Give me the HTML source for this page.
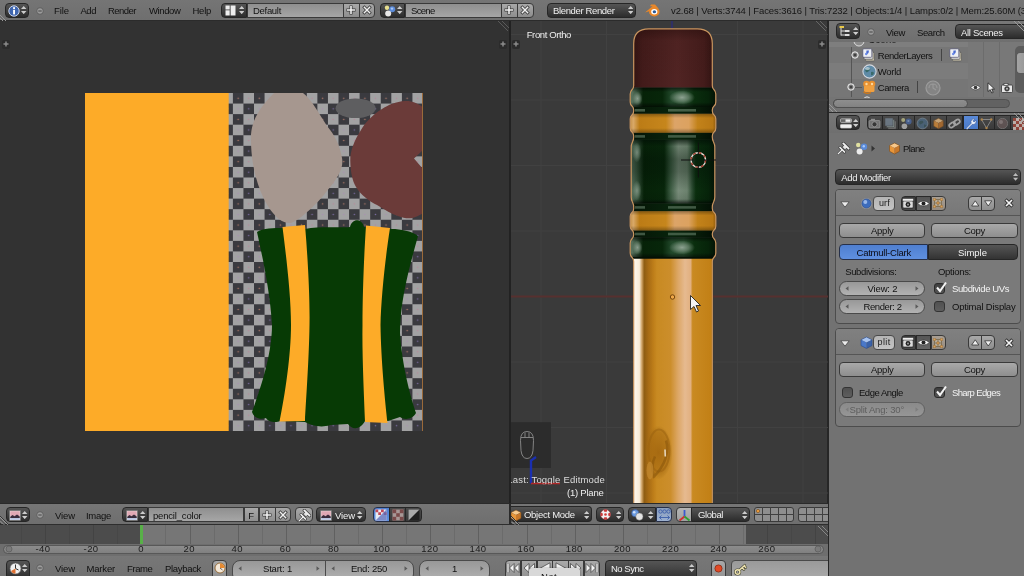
<!DOCTYPE html>
<html><head><meta charset="utf-8"><title>Blender</title>
<style>
*{box-sizing:border-box;margin:0;padding:0}
html,body{width:1024px;height:576px;overflow:hidden;background:#727272;font-family:"Liberation Sans",sans-serif;font-size:10px;color:#111}
.a{position:absolute;display:block}
.t{position:absolute;white-space:nowrap}
.btn{border:1px solid #3a3a3a;border-radius:4px;background:linear-gradient(#a9a9a9,#8e8e8e)}
.dd{border:1px solid #262626;border-radius:4px;background:linear-gradient(#555,#2c2c2c)}
.fld{border:1px solid #3a3a3a;background:linear-gradient(#8f8f8f,#a6a6a6)}
.num{border:1px solid #4a4a4a;border-radius:8px;background:linear-gradient(#989898,#b2b2b2)}
#wrap{position:absolute;left:-8px;top:-8px;width:1040px;height:592px;filter:blur(0.5px);overflow:hidden}
#in{position:absolute;left:8px;top:8px;width:1024px;height:576px}
</style></head><body><div id="wrap"><div id="in">
<div class="a " style="left:-8.00px;top:-8.00px;width:1040.00px;height:28.00px;background:linear-gradient(#777,#6f6f6f)"></div>
<div class="a " style="left:-8.00px;top:19.50px;width:1040.00px;height:1.50px;background:#2b2b2b"></div>
<div class="a " style="left:-8.00px;top:20.50px;width:518.00px;height:482.50px;background:#323232"></div>
<div class="a " style="left:509.30px;top:20.50px;width:1.70px;height:482.50px;background:#222"></div>
<div class="a v3d" style="left:511.00px;top:20.50px;width:316.50px;height:483.00px;background:#3a3a3a;overflow:hidden"></div>
<div class="a " style="left:827.00px;top:20.00px;width:2.00px;height:564.00px;background:#262626"></div>
<div class="a " style="left:829.00px;top:21.00px;width:203.00px;height:91.00px;background:#757575"></div>
<div class="a " style="left:829.00px;top:111.50px;width:203.00px;height:1.40px;background:#2a2a2a"></div>
<div class="a " style="left:829.00px;top:112.90px;width:203.00px;height:471.10px;background:#727272"></div>
<div class="a " style="left:-8.00px;top:503.00px;width:836.00px;height:22.00px;background:linear-gradient(#767676,#6e6e6e)"></div>
<div class="a " style="left:-8.00px;top:502.50px;width:836.00px;height:1.00px;background:#2a2a2a"></div>
<div class="a " style="left:509.30px;top:503.00px;width:1.70px;height:22.00px;background:#2a2a2a"></div>
<div class="a " style="left:-8.00px;top:524.40px;width:836.00px;height:59.60px;background:#2e2e2e"></div>
<svg class="a" style="left:85.00px;top:93.00px;" width="338" height="338" viewBox="0 0 338 338"><defs><pattern id="ck" x="0" y="0" width="21.125" height="21.125" patternUnits="userSpaceOnUse"><rect width="21.125" height="21.125" fill="#a2a2a3"/><rect width="10.5625" height="10.5625" fill="#3a3a3f"/><rect x="10.5625" y="10.5625" width="10.5625" height="10.5625" fill="#3a3a3f"/><circle cx="5.28125" cy="5.28125" r="0.8" fill="#b07a6a"/><circle cx="15.84375" cy="5.28125" r="0.8" fill="#b58a9a"/><circle cx="15.84375" cy="15.84375" r="0.8" fill="#7a6aa0"/><circle cx="5.28125" cy="15.84375" r="0.8" fill="#a890b0"/></pattern></defs><rect x="0" y="0" width="338" height="338" fill="url(#ck)"/><rect x="0" y="0" width="143.7" height="338" fill="#fdab28"/><path fill="#a6978f" d="M189,0 C177,12 165,27 166,47 C166,72 173,97 183,113 C190,125 199,131 206,130 C215,127 233,110 242,98 C253,85 259,75 257,65 C255,52 249,41 242,33 C233,19 227,7 218,0 Z"/><ellipse cx="270.6" cy="15.200000000000003" rx="20" ry="9.8" fill="#5e5e60"/><path fill="#6b3b39" d="M338,14.5 C333,10 326,7.5 320,8 C311,8.5 303,12 297,16 C287,22 280,30 276,37 C269,48 265,58 265.3,68 C265.5,78 267,87 271,94 C276,102 284,108 292,112 C300,117 307,121 313,123 C319,125.5 325,126 329,124.5 C333,123 336,121.5 338,120 L338,76 L329,65.5 L338,57 Z"/><path fill="#073a05" d="M172,139 C177,135 190,135 198,135 L220,136 C235,133 255,135 265,134 C267,125 277,125 279,134 L307,136 C315,136 327,138 333,143 C325,172 315,207 315,240 C317,272 325,302 331,320 C327,327 319,327 315,324 L303,328 L280,328 C275,337 267,337 263,331 L245,332 C237,335 227,333 220,329 L195,328 C191,330 183,329 181,325 C175,327 169,325 167,319 C175,297 187,262 187,232 C185,197 177,162 172,139 Z"/><path fill="#fdab28" d="M197.5,134 L220,132 C223,167 225,207 224.5,232 C224,267 221,307 220,328 L194.5,328.5 C200,302 206,262 206,232 C206,202 201,162 197.5,134 Z"/><path fill="#fdab28" d="M281,132.5 L305,135 C300,167 296,207 295.5,232 C296,267 300,307 302.5,330 L280,329 C279,302 277,262 277.5,232 C277.5,202 279,162 281,132.5 Z"/><rect x="337" y="0" width="1" height="338" fill="#9a6a3a"/></svg>
<div class="a " style="left:2.00px;top:40.10px;width:8.00px;height:8.60px;background:#2b2b2b;border-radius:2px"></div>
<svg class="a" style="left:3.00px;top:41.40px;" width="6" height="6" viewBox="0 0 6 6"><path d="M3 0.3 L3.7 2.3 L5.7 3 L3.7 3.7 L3 5.7 L2.3 3.7 L0.3 3 L2.3 2.3Z" fill="#8e8e8e" stroke="#8e8e8e" stroke-width="0.5"/></svg>
<div class="a " style="left:499.30px;top:40.10px;width:8.00px;height:8.60px;background:#2b2b2b;border-radius:2px"></div>
<svg class="a" style="left:500.30px;top:41.40px;" width="6" height="6" viewBox="0 0 6 6"><path d="M3 0.3 L3.7 2.3 L5.7 3 L3.7 3.7 L3 5.7 L2.3 3.7 L0.3 3 L2.3 2.3Z" fill="#8e8e8e" stroke="#8e8e8e" stroke-width="0.5"/></svg>
<svg class="a" style="left:496.00px;top:21.00px;" width="14" height="12" viewBox="0 0 14 12"><path d="M2 0L12 10M6 0L13 7" stroke="#5a5a5a" stroke-width="1"/></svg>
<div class="a" style="left:511px;top:20.5px;width:317px;height:482.5px;overflow:hidden">
<svg class="a" style="left:0;top:0" width="318" height="483" viewBox="0 0 318 483"><line x1="30" y1="0" x2="30" y2="483" stroke="#414141" stroke-width="1"/><line x1="95.5" y1="0" x2="95.5" y2="483" stroke="#414141" stroke-width="1"/><line x1="226.5" y1="0" x2="226.5" y2="483" stroke="#414141" stroke-width="1"/><line x1="292" y1="0" x2="292" y2="483" stroke="#414141" stroke-width="1"/><line x1="0" y1="13.5" x2="318" y2="13.5" stroke="#414141" stroke-width="1"/><line x1="0" y1="79.0" x2="318" y2="79.0" stroke="#414141" stroke-width="1"/><line x1="0" y1="144.5" x2="318" y2="144.5" stroke="#414141" stroke-width="1"/><line x1="0" y1="210.0" x2="318" y2="210.0" stroke="#414141" stroke-width="1"/><line x1="0" y1="341.0" x2="318" y2="341.0" stroke="#414141" stroke-width="1"/><line x1="0" y1="406.5" x2="318" y2="406.5" stroke="#414141" stroke-width="1"/><line x1="0" y1="472.0" x2="318" y2="472.0" stroke="#414141" stroke-width="1"/><line x1="0" y1="275.5" x2="318" y2="275.5" stroke="#57302f" stroke-width="2.2"/><line x1="161" y1="0" x2="161" y2="483" stroke="#303064" stroke-width="2.2"/><defs>
<linearGradient id="er" x1="0" x2="1" y1="0" y2="0"><stop offset="0" stop-color="#2a100e"/><stop offset="0.15" stop-color="#421b1a"/><stop offset="0.55" stop-color="#512423"/><stop offset="0.85" stop-color="#441c1b"/><stop offset="1" stop-color="#2a100e"/></linearGradient>
<linearGradient id="erv" x1="0" x2="0" y1="0" y2="1"><stop offset="0" stop-color="#1e0a08" stop-opacity="0.7"/><stop offset="0.3" stop-color="#1e0a08" stop-opacity="0.05"/><stop offset="1" stop-color="#1e0a08" stop-opacity="0"/></linearGradient>
<linearGradient id="gr" x1="0" x2="1" y1="0" y2="0"><stop offset="0" stop-color="#0c2412"/><stop offset="0.03" stop-color="#5a7460"/><stop offset="0.08" stop-color="#3c5842"/><stop offset="0.16" stop-color="#062208"/><stop offset="0.38" stop-color="#07260a"/><stop offset="0.48" stop-color="#21482a"/><stop offset="0.62" stop-color="#274e2f"/><stop offset="0.74" stop-color="#0a2e0e"/><stop offset="0.9" stop-color="#06240a"/><stop offset="1" stop-color="#031005"/></linearGradient>
<linearGradient id="grm" x1="0" x2="1" y1="0" y2="0"><stop offset="0" stop-color="#0c2412"/><stop offset="0.03" stop-color="#5a7460"/><stop offset="0.09" stop-color="#3c5842"/><stop offset="0.17" stop-color="#062208"/><stop offset="0.40" stop-color="#07260a"/><stop offset="0.47" stop-color="#3a5a40"/><stop offset="0.56" stop-color="#788c7a"/><stop offset="0.66" stop-color="#6c826e"/><stop offset="0.72" stop-color="#2a4a30"/><stop offset="0.76" stop-color="#0a2e0e"/><stop offset="0.9" stop-color="#06240a"/><stop offset="1" stop-color="#031005"/></linearGradient><linearGradient id="grd" x1="0" x2="1" y1="0" y2="0"><stop offset="0" stop-color="#041206"/><stop offset="0.2" stop-color="#061a08"/><stop offset="0.5" stop-color="#08240c"/><stop offset="0.8" stop-color="#061a08"/><stop offset="1" stop-color="#020c04"/></linearGradient>
<linearGradient id="og" x1="0" x2="1" y1="0" y2="0"><stop offset="0" stop-color="#c08a40"/><stop offset="0.05" stop-color="#d8a868"/><stop offset="0.12" stop-color="#bc7c16"/><stop offset="0.42" stop-color="#c6861c"/><stop offset="0.52" stop-color="#dca468"/><stop offset="0.68" stop-color="#dca260"/><stop offset="0.78" stop-color="#c2821a"/><stop offset="0.95" stop-color="#b87814"/><stop offset="1" stop-color="#86540c"/></linearGradient>
<linearGradient id="bd" x1="0" x2="1" y1="0" y2="0"><stop offset="0" stop-color="#c8a060"/><stop offset="0.012" stop-color="#fff8ee"/><stop offset="0.08" stop-color="#f8ecd8"/><stop offset="0.11" stop-color="#d0a468"/><stop offset="0.14" stop-color="#8e5c12"/><stop offset="0.19" stop-color="#a66a14"/><stop offset="0.26" stop-color="#bf7f1a"/><stop offset="0.30" stop-color="#c88a22"/><stop offset="0.47" stop-color="#cc8e2c"/><stop offset="0.56" stop-color="#dca664"/><stop offset="0.65" stop-color="#e6ba90"/><stop offset="0.72" stop-color="#e2b080"/><stop offset="0.745" stop-color="#c98a22"/><stop offset="0.97" stop-color="#c28016"/><stop offset="1" stop-color="#a06a10"/></linearGradient>
<linearGradient id="bandv" x1="0" x2="0" y1="0" y2="1"><stop offset="0" stop-color="#000" stop-opacity="0.55"/><stop offset="0.22" stop-color="#000" stop-opacity="0"/><stop offset="0.75" stop-color="#000" stop-opacity="0"/><stop offset="1" stop-color="#000" stop-opacity="0.6"/></linearGradient>
<linearGradient id="mainv" x1="0" x2="0" y1="0" y2="1"><stop offset="0" stop-color="#021006" stop-opacity="0.7"/><stop offset="0.1" stop-color="#021006" stop-opacity="0.1"/><stop offset="0.3" stop-color="#021006" stop-opacity="0.35"/><stop offset="0.5" stop-color="#021006" stop-opacity="0.3"/><stop offset="0.8" stop-color="#021006" stop-opacity="0"/><stop offset="0.93" stop-color="#021006" stop-opacity="0.1"/><stop offset="1" stop-color="#000" stop-opacity="0.7"/></linearGradient>
<radialGradient id="hl"><stop offset="0" stop-color="#9fb0a2" stop-opacity="0.9"/><stop offset="0.5" stop-color="#8aa08e" stop-opacity="0.6"/><stop offset="1" stop-color="#8aa08e" stop-opacity="0"/></radialGradient>
<radialGradient id="kn"><stop offset="0" stop-color="#a0640e" stop-opacity="0.85"/><stop offset="0.75" stop-color="#a86c12" stop-opacity="0.6"/><stop offset="1" stop-color="#a06a14" stop-opacity="0"/></radialGradient>
<clipPath id="sc"><path d="M122.70,489.50 L122.70,240.60 Q122.70,238.00 120.95,236.25 L120.95,236.25 Q119.20,234.50 119.20,231.90 L119.20,222.10 Q119.20,219.50 120.95,217.75 L120.95,217.75 Q122.70,216.00 122.70,213.40 L122.70,213.10 Q122.70,210.50 120.95,209.00 L120.95,209.00 Q119.20,207.50 119.20,204.90 L119.20,195.60 Q119.20,193.00 120.95,191.50 L120.95,191.50 Q122.70,190.00 122.70,187.40 L122.70,186.10 Q122.70,183.50 121.54,181.17 L121.36,180.83 Q120.20,178.50 120.20,175.90 L120.20,126.10 Q120.20,123.50 121.36,121.17 L121.54,120.83 Q122.70,118.50 122.70,115.90 L122.70,115.10 Q122.70,112.50 120.95,111.00 L120.95,111.00 Q119.20,109.50 119.20,106.90 L119.20,98.10 Q119.20,95.50 120.95,94.00 L120.95,94.00 Q122.70,92.50 122.70,89.90 L122.70,89.10 Q122.70,86.50 120.95,85.00 L120.95,85.00 Q119.20,83.50 119.20,80.90 L119.20,73.10 Q119.20,70.50 120.95,68.75 L120.95,68.75 Q122.70,67.00 122.70,64.40 L122.70,22.50 Q122.7,7.8 137.7,7.8 L186.3,7.8 Q201.3,7.8 201.3,22.5 L201.30,22.50 L201.30,64.40 Q201.30,67.00 203.05,68.75 L203.05,68.75 Q204.80,70.50 204.80,73.10 L204.80,80.90 Q204.80,83.50 203.05,85.00 L203.05,85.00 Q201.30,86.50 201.30,89.10 L201.30,89.90 Q201.30,92.50 203.05,94.00 L203.05,94.00 Q204.80,95.50 204.80,98.10 L204.80,106.90 Q204.80,109.50 203.05,111.00 L203.05,111.00 Q201.30,112.50 201.30,115.10 L201.30,115.90 Q201.30,118.50 202.46,120.83 L202.64,121.17 Q203.80,123.50 203.80,126.10 L203.80,175.90 Q203.80,178.50 202.64,180.83 L202.46,181.17 Q201.30,183.50 201.30,186.10 L201.30,187.40 Q201.30,190.00 203.05,191.50 L203.05,191.50 Q204.80,193.00 204.80,195.60 L204.80,204.90 Q204.80,207.50 203.05,209.00 L203.05,209.00 Q201.30,210.50 201.30,213.10 L201.30,213.40 Q201.30,216.00 203.05,217.75 L203.05,217.75 Q204.80,219.50 204.80,222.10 L204.80,231.90 Q204.80,234.50 203.05,236.25 L203.05,236.25 Q201.30,238.00 201.30,240.60 L201.30,489.50 Z"/></clipPath></defs><g clip-path="url(#sc)"><rect x="122" y="237.0" width="80" height="260" fill="url(#bd)"/><ellipse cx="147.5" cy="431.5" rx="14" ry="27" fill="url(#kn)"/><ellipse cx="148" cy="429.5" rx="10.5" ry="21" fill="none" stroke="#9a6210" stroke-opacity="0.55" stroke-width="2"/><path d="M155,419.5 C159,431.5 153,445.5 143,455.5 C141,449.5 141,441.5 144,435.5" stroke="#8a560c" stroke-opacity="0.6" stroke-width="2.5" fill="none"/><ellipse cx="139" cy="449.5" rx="3.5" ry="9" fill="#c48a30" opacity="0.7"/><path d="M154,428.5 L154.29999999999995,435.5" stroke="#f0e8d8" stroke-opacity="0.85" stroke-width="1.6" fill="none"/><rect x="118.0" y="-0.5" width="88" height="67.2" fill="url(#er)" /><rect x="118.0" y="-0.5" width="88" height="67.2" fill="url(#erv)" /><rect x="118.0" y="66.7" width="88" height="19.299999999999997" fill="url(#gr)" /><rect x="118.0" y="66.7" width="88" height="19.299999999999997" fill="url(#bandv)" /><rect x="118.0" y="86.0" width="88" height="6.799999999999997" fill="url(#grd)" /><rect x="157" y="88.0" width="28" height="2.6" fill="#6f8a72" opacity="0.6"/><rect x="124" y="88.0" width="10" height="2.6" fill="#6f8a72" opacity="0.6"/><rect x="118.0" y="92.8" width="88" height="19.10000000000001" fill="url(#og)" /><rect x="118.0" y="92.8" width="88" height="19.10000000000001" fill="url(#bandv)" opacity="0.55"/><rect x="118.0" y="111.9" width="88" height="7.0" fill="url(#grd)" /><rect x="157" y="114.1" width="28" height="2.6" fill="#6f8a72" opacity="0.55"/><rect x="124" y="114.1" width="10" height="2.6" fill="#6f8a72" opacity="0.55"/><rect x="118.0" y="118.9" width="88" height="63.599999999999994" fill="url(#grm)" /><rect x="118.0" y="118.9" width="88" height="63.599999999999994" fill="url(#mainv)" /><rect x="118.0" y="182.5" width="88" height="7.699999999999989" fill="url(#grd)" /><rect x="157" y="185.1" width="28" height="2.6" fill="#6f8a72" opacity="0.55"/><rect x="124" y="185.1" width="10" height="2.6" fill="#6f8a72" opacity="0.55"/><rect x="118.0" y="190.2" width="88" height="19.5" fill="url(#og)" /><rect x="118.0" y="190.2" width="88" height="19.5" fill="url(#bandv)" opacity="0.55"/><rect x="118.0" y="209.7" width="88" height="6.600000000000023" fill="url(#grd)" /><rect x="157" y="211.7" width="28" height="2.6" fill="#6f8a72" opacity="0.55"/><rect x="124" y="211.7" width="10" height="2.6" fill="#6f8a72" opacity="0.55"/><rect x="118.0" y="216.3" width="88" height="20.80000000000001" fill="url(#gr)" /><rect x="118.0" y="216.3" width="88" height="20.80000000000001" fill="url(#bandv)" /><rect x="118.0" y="236.10000000000002" width="88" height="1.6" fill="#041006"/><ellipse cx="171" cy="76.5" rx="13" ry="7" fill="url(#hl)" opacity="0.95"/><ellipse cx="126.5" cy="77.5" rx="5" ry="7" fill="url(#hl)" opacity="0.9"/><ellipse cx="171" cy="226.5" rx="13" ry="7" fill="url(#hl)" opacity="0.95"/><ellipse cx="126.5" cy="226.5" rx="5" ry="7" fill="url(#hl)" opacity="0.9"/><ellipse cx="126" cy="131.5" rx="4.5" ry="10" fill="url(#hl)" opacity="0.7"/><ellipse cx="126" cy="169.5" rx="4.5" ry="10" fill="url(#hl)" opacity="0.7"/></g><path d="M122.70,489.50 L122.70,240.60 Q122.70,238.00 120.95,236.25 L120.95,236.25 Q119.20,234.50 119.20,231.90 L119.20,222.10 Q119.20,219.50 120.95,217.75 L120.95,217.75 Q122.70,216.00 122.70,213.40 L122.70,213.10 Q122.70,210.50 120.95,209.00 L120.95,209.00 Q119.20,207.50 119.20,204.90 L119.20,195.60 Q119.20,193.00 120.95,191.50 L120.95,191.50 Q122.70,190.00 122.70,187.40 L122.70,186.10 Q122.70,183.50 121.54,181.17 L121.36,180.83 Q120.20,178.50 120.20,175.90 L120.20,126.10 Q120.20,123.50 121.36,121.17 L121.54,120.83 Q122.70,118.50 122.70,115.90 L122.70,115.10 Q122.70,112.50 120.95,111.00 L120.95,111.00 Q119.20,109.50 119.20,106.90 L119.20,98.10 Q119.20,95.50 120.95,94.00 L120.95,94.00 Q122.70,92.50 122.70,89.90 L122.70,89.10 Q122.70,86.50 120.95,85.00 L120.95,85.00 Q119.20,83.50 119.20,80.90 L119.20,73.10 Q119.20,70.50 120.95,68.75 L120.95,68.75 Q122.70,67.00 122.70,64.40 L122.70,22.50 Q122.7,7.8 137.7,7.8 L186.3,7.8 Q201.3,7.8 201.3,22.5 L201.30,22.50 L201.30,64.40 Q201.30,67.00 203.05,68.75 L203.05,68.75 Q204.80,70.50 204.80,73.10 L204.80,80.90 Q204.80,83.50 203.05,85.00 L203.05,85.00 Q201.30,86.50 201.30,89.10 L201.30,89.90 Q201.30,92.50 203.05,94.00 L203.05,94.00 Q204.80,95.50 204.80,98.10 L204.80,106.90 Q204.80,109.50 203.05,111.00 L203.05,111.00 Q201.30,112.50 201.30,115.10 L201.30,115.90 Q201.30,118.50 202.46,120.83 L202.64,121.17 Q203.80,123.50 203.80,126.10 L203.80,175.90 Q203.80,178.50 202.64,180.83 L202.46,181.17 Q201.30,183.50 201.30,186.10 L201.30,187.40 Q201.30,190.00 203.05,191.50 L203.05,191.50 Q204.80,193.00 204.80,195.60 L204.80,204.90 Q204.80,207.50 203.05,209.00 L203.05,209.00 Q201.30,210.50 201.30,213.10 L201.30,213.40 Q201.30,216.00 203.05,217.75 L203.05,217.75 Q204.80,219.50 204.80,222.10 L204.80,231.90 Q204.80,234.50 203.05,236.25 L203.05,236.25 Q201.30,238.00 201.30,240.60 L201.30,489.50 Z" fill="none" stroke="#c99660" stroke-width="1.2"/><circle cx="187.29999999999995" cy="139.0" r="7.3" fill="none" stroke="#e6ded8" stroke-width="1.4"/><circle cx="187.29999999999995" cy="139.0" r="7.3" fill="none" stroke="#a03828" stroke-width="1.4" stroke-dasharray="2.87 2.87"/><path d="M170,139.0H182.5M192.5,139.0H205M187.29999999999995,121.5V134.0M187.29999999999995,144.0V156.5" stroke="#101010" stroke-width="1"/><circle cx="161.5" cy="276.0" r="2.2" fill="#f0a848" stroke="#5a3000" stroke-width="0.8"/><path d="M179.5,274.5 L179.5,288.5 L183,285.5 L185.5,291.0 L187.5,290.0 L185,284.5 L189.5,284.5 Z" fill="#f4f4f4" stroke="#222" stroke-width="0.9"/><rect x="0" y="401.2" width="40" height="45.8" fill="#2c2c2c"/><path d="M9.5,419.5 Q9.5,410.5 16,410.5 Q22.5,410.5 22.5,419.5 L22,429.5 Q21,437.5 16,437.5 Q11,437.5 10,429.5 Z M10,416.5H22 M14,411.5V416.5 M18,411.5V416.5" fill="none" stroke="#8c8c8c" stroke-width="0.9"/><path d="M20,462.5V439.5L25,436.0" stroke="#1a2fb0" stroke-width="2.4" fill="none"/><path d="M20,462.5H49" stroke="#b02828" stroke-width="1.6" fill="none"/></svg>
</div>
<div class="t" style="left:526.70px;top:30.36px;font-size:9.5px;line-height:9.5px;letter-spacing:-0.388px;color:#eee;">Front Ortho</div>
<div class="t" style="left:507.30px;top:474.76px;font-size:9.5px;line-height:9.5px;letter-spacing:0.185px;color:#ddd;clip-path:inset(0 0 0 3.7px);">Last: Toggle Editmode</div>
<div class="t" style="left:567.00px;top:487.76px;font-size:9.5px;line-height:9.5px;letter-spacing:-0.227px;color:#eee;">(1) Plane</div>
<div class="a " style="left:511.50px;top:40.10px;width:8.00px;height:8.60px;background:#2b2b2b;border-radius:2px"></div>
<svg class="a" style="left:512.50px;top:41.40px;" width="6" height="6" viewBox="0 0 6 6"><path d="M3 0.3 L3.7 2.3 L5.7 3 L3.7 3.7 L3 5.7 L2.3 3.7 L0.3 3 L2.3 2.3Z" fill="#8e8e8e" stroke="#8e8e8e" stroke-width="0.5"/></svg>
<div class="a " style="left:817.50px;top:40.10px;width:8.00px;height:8.60px;background:#2b2b2b;border-radius:2px"></div>
<svg class="a" style="left:818.50px;top:41.40px;" width="6" height="6" viewBox="0 0 6 6"><path d="M3 0.3 L3.7 2.3 L5.7 3 L3.7 3.7 L3 5.7 L2.3 3.7 L0.3 3 L2.3 2.3Z" fill="#8e8e8e" stroke="#8e8e8e" stroke-width="0.5"/></svg>
<svg class="a" style="left:814.00px;top:21.00px;" width="14" height="12" viewBox="0 0 14 12"><path d="M2 0L12 10M6 0L13 7" stroke="#666" stroke-width="1"/></svg>
<div class="a dd" style="left:5.00px;top:2.50px;width:23.50px;height:15.50px;"></div>
<svg class="a" style="left:8.00px;top:4.50px;" width="12" height="12" viewBox="0 0 12 12"><circle cx="6" cy="6" r="5.2" fill="#3f66b0" stroke="#c9d4ea" stroke-width="1"/><rect x="5.1" y="4.8" width="1.9" height="4.6" fill="#fff"/><rect x="5.1" y="2.2" width="1.9" height="1.8" fill="#fff"/></svg>
<svg class="a" style="left:21.28px;top:6.22px;" width="5.44" height="8.16" viewBox="0 0 5.44 8.16"><path d="M2.72,0 L5.44,3.06 L0,3.06Z M0,5.1 L5.44,5.1 L2.72,8.16Z" fill="#ccc"/></svg>
<svg class="a" style="left:36.00px;top:6.80px;" width="8" height="8" viewBox="0 0 8 8"><circle cx="4" cy="4" r="3.3" fill="#9a9a9a" stroke="#555" stroke-width="0.8"/><path d="M2.3 4H5.7" stroke="#444" stroke-width="1"/></svg>
<div class="t" style="left:54.00px;top:6.26px;font-size:9.5px;line-height:9.5px;letter-spacing:-0.077px;color:#111;">File</div>
<div class="t" style="left:80.50px;top:6.26px;font-size:9.5px;line-height:9.5px;letter-spacing:-0.468px;color:#111;">Add</div>
<div class="t" style="left:108.00px;top:6.26px;font-size:9.5px;line-height:9.5px;letter-spacing:-0.526px;color:#111;">Render</div>
<div class="t" style="left:149.00px;top:6.26px;font-size:9.5px;line-height:9.5px;letter-spacing:-0.381px;color:#111;">Window</div>
<div class="t" style="left:192.50px;top:6.26px;font-size:9.5px;line-height:9.5px;letter-spacing:-0.259px;color:#111;">Help</div>
<div class="a dd" style="left:221.00px;top:2.50px;width:26.00px;height:15.50px;border-radius:4px 0 0 4px"></div>
<svg class="a" style="left:225.00px;top:5.00px;" width="11" height="11" viewBox="0 0 11 11"><rect x="0.5" y="0.5" width="4.2" height="4" fill="#eee"/><rect x="0.5" y="5.3" width="4.2" height="5.2" fill="#eee"/><rect x="5.6" y="0.5" width="4.9" height="10" fill="#eee"/></svg>
<svg class="a" style="left:238.78px;top:6.22px;" width="5.44" height="8.16" viewBox="0 0 5.44 8.16"><path d="M2.72,0 L5.44,3.06 L0,3.06Z M0,5.1 L5.44,5.1 L2.72,8.16Z" fill="#ccc"/></svg>
<div class="a fld" style="left:246.50px;top:2.50px;width:97.00px;height:15.50px;"></div>
<div class="t" style="left:253.00px;top:6.26px;font-size:9.5px;line-height:9.5px;letter-spacing:-0.300px;color:#111;">Default</div>
<div class="a btn" style="left:343.00px;top:2.50px;width:16.50px;height:15.50px;border-radius:0;background:linear-gradient(#a8a8a8,#8e8e8e)"></div>
<svg class="a" style="left:346.25px;top:5.25px;" width="10" height="10" viewBox="0 0 10 10"><path d="M5 0.5V9.5M0.5 5H9.5" stroke="#333" stroke-width="3"/><path d="M5 1V9M1 5H9" stroke="#f2f2f2" stroke-width="1.6"/></svg>
<div class="a btn" style="left:359.00px;top:2.50px;width:15.50px;height:15.50px;border-radius:0 4px 4px 0;background:linear-gradient(#a8a8a8,#8e8e8e)"></div>
<svg class="a" style="left:361.75px;top:5.25px;" width="10" height="10" viewBox="0 0 10 10"><path d="M1.3 1.3L8.7 8.7M8.7 1.3L1.3 8.7" stroke="#333" stroke-width="3"/><path d="M1.8 1.8L8.2 8.2M8.2 1.8L1.8 8.2" stroke="#f2f2f2" stroke-width="1.5"/></svg>
<div class="a dd" style="left:380.00px;top:2.50px;width:25.00px;height:15.50px;border-radius:4px 0 0 4px"></div>
<svg class="a" style="left:383.50px;top:4.50px;" width="13" height="12" viewBox="0 0 13 12"><circle cx="3" cy="2.8" r="2.2" fill="#e8e090"/><circle cx="8.2" cy="4.2" r="3" fill="#5a8ad8"/><circle cx="8" cy="3.6" r="1.2" fill="#a8c8f8"/><circle cx="4.2" cy="8.6" r="3" fill="#e8e8e8"/></svg>
<svg class="a" style="left:397.28px;top:6.22px;" width="5.44" height="8.16" viewBox="0 0 5.44 8.16"><path d="M2.72,0 L5.44,3.06 L0,3.06Z M0,5.1 L5.44,5.1 L2.72,8.16Z" fill="#ccc"/></svg>
<div class="a fld" style="left:404.50px;top:2.50px;width:97.00px;height:15.50px;"></div>
<div class="t" style="left:411.00px;top:6.26px;font-size:9.5px;line-height:9.5px;letter-spacing:-0.687px;color:#111;">Scene</div>
<div class="a btn" style="left:501.00px;top:2.50px;width:16.50px;height:15.50px;border-radius:0;background:linear-gradient(#a8a8a8,#8e8e8e)"></div>
<svg class="a" style="left:504.25px;top:5.25px;" width="10" height="10" viewBox="0 0 10 10"><path d="M5 0.5V9.5M0.5 5H9.5" stroke="#333" stroke-width="3"/><path d="M5 1V9M1 5H9" stroke="#f2f2f2" stroke-width="1.6"/></svg>
<div class="a btn" style="left:517.00px;top:2.50px;width:16.50px;height:15.50px;border-radius:0 4px 4px 0;background:linear-gradient(#a8a8a8,#8e8e8e)"></div>
<svg class="a" style="left:520.25px;top:5.25px;" width="10" height="10" viewBox="0 0 10 10"><path d="M1.3 1.3L8.7 8.7M8.7 1.3L1.3 8.7" stroke="#333" stroke-width="3"/><path d="M1.8 1.8L8.2 8.2M8.2 1.8L1.8 8.2" stroke="#f2f2f2" stroke-width="1.5"/></svg>
<div class="a dd" style="left:547.00px;top:2.50px;width:89.00px;height:15.50px;"></div>
<div class="t" style="left:553.00px;top:6.26px;font-size:9.5px;line-height:9.5px;letter-spacing:-0.360px;color:#f0f0f0;">Blender Render</div>
<svg class="a" style="left:627.78px;top:6.22px;" width="5.44" height="8.16" viewBox="0 0 5.44 8.16"><path d="M2.72,0 L5.44,3.06 L0,3.06Z M0,5.1 L5.44,5.1 L2.72,8.16Z" fill="#ccc"/></svg>
<svg class="a" style="left:644.00px;top:3.00px;" width="17" height="15" viewBox="0 0 17 15"><path d="M1,9.5 L8.5,3.2 L6,3.2 L7,1.6 L11,1.6 L14.5,5.5 Z" fill="#e8872a"/><ellipse cx="10.3" cy="8.8" rx="5.3" ry="4.6" fill="#e8872a"/><ellipse cx="10.3" cy="8.8" rx="3.1" ry="2.7" fill="#fff"/><ellipse cx="10.4" cy="8.8" rx="1.7" ry="1.5" fill="#2a5a9a"/></svg>
<div class="t" style="left:671.00px;top:6.26px;font-size:9.5px;line-height:9.5px;letter-spacing:-0.091px;color:#151515;clip-path:inset(0 2px 0 0);">v2.68 | Verts:3744 | Faces:3616 | Tris:7232 | Objects:1/4 | Lamps:0/2 | Mem:25.60M (3</div>
<svg class="a" style="left:0.00px;top:14.00px;" width="10" height="7" viewBox="0 0 10 7"><path d="M0 1L6 7M0 4L3 7" stroke="#999" stroke-width="1"/></svg>
<div class="a " style="left:829.00px;top:21.00px;width:203.00px;height:20.50px;background:linear-gradient(#777,#6f6f6f)"></div>
<div class="a " style="left:829.00px;top:41.50px;width:138.50px;height:5.50px;background:#7e7e7e"></div>
<div class="a " style="left:829.00px;top:47.00px;width:138.50px;height:16.00px;background:#767676"></div>
<div class="a " style="left:829.00px;top:63.00px;width:138.50px;height:16.00px;background:#7c7c7c"></div>
<div class="a " style="left:829.00px;top:79.00px;width:138.50px;height:18.00px;background:#767676"></div>
<div class="a " style="left:967.50px;top:41.50px;width:64.50px;height:55.50px;background:#787878"></div>
<div class="a " style="left:983.30px;top:41.50px;width:1.00px;height:55.50px;background:#6c6c6c"></div>
<div class="a " style="left:998.80px;top:41.50px;width:1.00px;height:55.50px;background:#6c6c6c"></div>
<div class="a " style="left:829.00px;top:97.00px;width:203.00px;height:14.60px;background:#747474"></div>
<div class="a dd" style="left:836.00px;top:23.30px;width:24.00px;height:15.50px;"></div>
<svg class="a" style="left:839.00px;top:25.00px;" width="12" height="12" viewBox="0 0 12 12"><rect x="0.5" y="1" width="4.5" height="2" fill="#e8c848"/><path d="M2 3V10.5M2 6H5M2 10H5" stroke="#ddd" stroke-width="1"/><rect x="5.5" y="5" width="5" height="2" fill="#ddd"/><rect x="5.5" y="9" width="5" height="2" fill="#ddd"/></svg>
<svg class="a" style="left:852.58px;top:26.92px;" width="5.44" height="8.16" viewBox="0 0 5.44 8.16"><path d="M2.72,0 L5.44,3.06 L0,3.06Z M0,5.1 L5.44,5.1 L2.72,8.16Z" fill="#ccc"/></svg>
<svg class="a" style="left:866.50px;top:27.60px;" width="8" height="8" viewBox="0 0 8 8"><circle cx="4" cy="4" r="3.3" fill="#9a9a9a" stroke="#555" stroke-width="0.8"/><path d="M2.3 4H5.7" stroke="#444" stroke-width="1"/></svg>
<div class="t" style="left:886.00px;top:27.76px;font-size:9.5px;line-height:9.5px;letter-spacing:-0.355px;color:#111;">View</div>
<div class="t" style="left:917.00px;top:27.76px;font-size:9.5px;line-height:9.5px;letter-spacing:-0.400px;color:#111;">Search</div>
<div class="a dd" style="left:955.00px;top:23.60px;width:85.00px;height:15.40px;"></div>
<div class="t" style="left:961.00px;top:27.76px;font-size:9.5px;line-height:9.5px;letter-spacing:-0.318px;color:#f0f0f0;">All Scenes</div>
<svg class="a" style="left:1012.00px;top:21.00px;" width="12" height="10" viewBox="0 0 12 10"><path d="M2 0L12 10M6 0L12 6" stroke="#999" stroke-width="1"/></svg>
<div class="a" style="left:830.5px;top:41.5px;width:140px;height:6px;overflow:hidden">
<svg class="a" style="left:22.00px;top:-6.00px;" width="14" height="12" viewBox="0 0 14 12"><circle cx="6" cy="5" r="5" fill="#8c8c8c" stroke="#ddd" stroke-width="1"/></svg>
<div class="t" style="left:38px;top:-6.5px;font-size:10px;line-height:10px;color:#222">Scene</div>
</div>
<div class="a " style="left:850.80px;top:47.00px;width:0.80px;height:50.00px;background:#555"></div>
<svg class="a" style="left:851.00px;top:51.00px;" width="8" height="8" viewBox="0 0 8 8"><circle cx="4" cy="4" r="3.2" fill="#8a8a8a" stroke="#eee" stroke-width="1"/><path d="M2.4 4H5.6M4 2.4V5.6" stroke="#222" stroke-width="0.9"/></svg>
<svg class="a" style="left:847.00px;top:83.00px;" width="8" height="8" viewBox="0 0 8 8"><circle cx="4" cy="4" r="3.2" fill="#8a8a8a" stroke="#eee" stroke-width="1"/><path d="M2.4 4H5.6M4 2.4V5.6" stroke="#222" stroke-width="0.9"/></svg>
<div class="a " style="left:855.00px;top:86.60px;width:7.00px;height:0.80px;background:#555"></div>
<svg class="a" style="left:861.50px;top:48.00px;" width="14" height="14" viewBox="0 0 14 14"><rect x="3.5" y="4.5" width="9" height="8.5" rx="1" fill="#c8c0a8" stroke="#5a5a5a" stroke-width="0.7"/><rect x="2" y="2.8" width="9" height="8.5" rx="1" fill="#d8d8d8" stroke="#5a5a5a" stroke-width="0.7"/><rect x="0.8" y="0.8" width="9" height="8.5" rx="1" fill="#eef0f4" stroke="#4a4a6a" stroke-width="0.7"/><path d="M4.5 2.5 L7 2.5 L6.5 5 L4 7 Z" fill="#4a6ad0"/><circle cx="4.2" cy="6" r="1.2" fill="#6a8ae8"/></svg>
<div class="t" style="left:877.70px;top:50.56px;font-size:9.5px;line-height:9.5px;letter-spacing:-0.414px;color:#111;">RenderLayers</div>
<div class="a " style="left:940.60px;top:49.00px;width:1.00px;height:12.00px;background:#444"></div>
<svg class="a" style="left:948.50px;top:48.00px;" width="14" height="14" viewBox="0 0 14 14"><rect x="3.5" y="4.5" width="9" height="8.5" rx="1" fill="#c8c0a8" stroke="#5a5a5a" stroke-width="0.7"/><rect x="2" y="2.8" width="9" height="8.5" rx="1" fill="#d8d8d8" stroke="#5a5a5a" stroke-width="0.7"/><rect x="0.8" y="0.8" width="9" height="8.5" rx="1" fill="#eef0f4" stroke="#4a4a6a" stroke-width="0.7"/><path d="M4.5 2.5 L7 2.5 L6.5 5 L4 7 Z" fill="#4a6ad0"/><circle cx="4.2" cy="6" r="1.2" fill="#6a8ae8"/></svg>
<svg class="a" style="left:861.50px;top:63.50px;" width="15" height="15" viewBox="0 0 15 15"><circle cx="7.5" cy="7.5" r="6.6" fill="#5e8aa6" stroke="#d4d8e0" stroke-width="1.1"/><path d="M3 6 Q5 3 8 4 Q9 6 7 7 Q5 9 4 8Z M9 8 Q11 7 12 9 Q11 12 9 11Z" fill="#3a6a6a"/><ellipse cx="5.5" cy="4.5" rx="2.5" ry="1.6" fill="#cfe0ea" opacity="0.7"/></svg>
<div class="t" style="left:877.70px;top:66.86px;font-size:9.5px;line-height:9.5px;letter-spacing:-0.267px;color:#111;">World</div>
<svg class="a" style="left:861.50px;top:80.00px;" width="15" height="14" viewBox="0 0 15 14"><circle cx="4.5" cy="4" r="3.3" fill="#e89030"/><circle cx="10" cy="4" r="3.3" fill="#e89030"/><rect x="2" y="5.5" width="10.5" height="6.5" rx="1.5" fill="#f0a040"/><path d="M1.5 12 L5 13.5 L9 12.5" stroke="#c87820" stroke-width="1.5" fill="none"/><circle cx="4.5" cy="4" r="1.2" fill="#fbd9a0"/><circle cx="10" cy="4" r="1.2" fill="#fbd9a0"/></svg>
<div class="t" style="left:877.70px;top:82.86px;font-size:9.5px;line-height:9.5px;letter-spacing:-0.414px;color:#111;">Camera</div>
<div class="a " style="left:917.30px;top:81.00px;width:1.00px;height:12.00px;background:#444"></div>
<svg class="a" style="left:924.50px;top:79.50px;" width="16" height="16" viewBox="0 0 16 16"><circle cx="8" cy="8" r="7" fill="#848484" stroke="#9c9c9c" stroke-width="1.2"/><path d="M4 8 A4 4 0 0 1 12 8 M8 4 L8 8 L11 10" stroke="#9a9a9a" stroke-width="1.1" fill="none"/></svg>
<svg class="a" style="left:970.00px;top:82.50px;" width="11" height="9" viewBox="0 0 11 9"><path d="M0.5 4.5 Q5.5 -0.5 10.5 4.5 Q5.5 9.5 0.5 4.5Z" fill="#f0f0f0" stroke="#444" stroke-width="0.7"/><circle cx="5.5" cy="4.5" r="1.8" fill="#333"/></svg>
<svg class="a" style="left:987.00px;top:81.50px;" width="9" height="12" viewBox="0 0 9 12"><path d="M1 0.8 L1 9.5 L3.2 7.6 L4.8 11 L6.2 10.4 L4.7 7 L7.5 7 Z" fill="#f4f4f4" stroke="#222" stroke-width="0.8"/></svg>
<svg class="a" style="left:1001.00px;top:82.50px;" width="12" height="10" viewBox="0 0 12 10"><rect x="0.5" y="2" width="11" height="7.5" rx="1" fill="#e8e8e8" stroke="#333" stroke-width="0.8"/><rect x="3" y="0.5" width="4" height="2" fill="#e8e8e8" stroke="#333" stroke-width="0.6"/><circle cx="6" cy="5.8" r="2.4" fill="#444" stroke="#222" stroke-width="0.5"/><circle cx="6" cy="5.8" r="1" fill="#bbb"/></svg>
<div class="a" style="left:830.5px;top:93px;width:140px;height:5px;overflow:hidden">
<svg class="a" style="left:32.00px;top:2.50px;" width="8" height="8" viewBox="0 0 8 8"><circle cx="4" cy="4" r="3.2" fill="#8a8a8a" stroke="#ddd" stroke-width="1"/></svg>
</div>
<div class="a " style="left:1014.50px;top:46.00px;width:19.50px;height:47.00px;background:#5c5c5c;border-radius:5px 0 0 5px"></div>
<div class="a " style="left:1015.50px;top:52.00px;width:18.50px;height:22.00px;background:linear-gradient(90deg,#a4a4a4,#8c8c8c);border-radius:4px 0 0 4px;border:1px solid #5a5a5a;border-right:0"></div>
<div class="a " style="left:832.50px;top:98.80px;width:177.50px;height:9.40px;background:#626262;border-radius:5px;border:1px solid #505050"></div>
<div class="a " style="left:832.50px;top:98.80px;width:135.50px;height:9.40px;background:linear-gradient(#8e8e8e,#828282);border-radius:5px;border:1px solid #505050"></div>
<svg class="a" style="left:829.30px;top:101.50px;" width="10" height="10" viewBox="0 0 10 10"><path d="M0 2L8 10M0 6L4 10" stroke="#999" stroke-width="1"/></svg>
<div class="a " style="left:829.00px;top:112.90px;width:203.00px;height:20.10px;background:linear-gradient(#777,#6f6f6f)"></div>
<div class="a dd" style="left:836.00px;top:115.30px;width:24.00px;height:15.20px;"></div>
<svg class="a" style="left:839.50px;top:117.50px;" width="12" height="11" viewBox="0 0 12 11"><rect x="0.5" y="0.8" width="11" height="3.6" rx="0.8" fill="#666" stroke="#ccc" stroke-width="0.7"/><rect x="5.5" y="1.4" width="5" height="2.4" fill="#eee"/><rect x="0.5" y="6.4" width="11" height="3.6" rx="0.8" fill="#eee" stroke="#ccc" stroke-width="0.7"/></svg>
<svg class="a" style="left:852.58px;top:118.92px;" width="5.44" height="8.16" viewBox="0 0 5.44 8.16"><path d="M2.72,0 L5.44,3.06 L0,3.06Z M0,5.1 L5.44,5.1 L2.72,8.16Z" fill="#ccc"/></svg>
<div class="a dd" style="left:866.60px;top:115.30px;width:163.40px;height:15.20px;border-radius:4px 0 0 4px;background:linear-gradient(#4a4a4a,#3a3a3a)"></div>
<div class="a " style="left:962.70px;top:115.30px;width:16.00px;height:15.20px;background:linear-gradient(#5a8ad8,#4a7ac8);border:1px solid #262626"></div>
<div class="a " style="left:882.20px;top:116.30px;width:0.80px;height:13.20px;background:#252525"></div>
<div class="a " style="left:898.20px;top:116.30px;width:0.80px;height:13.20px;background:#252525"></div>
<div class="a " style="left:914.10px;top:116.30px;width:0.80px;height:13.20px;background:#252525"></div>
<div class="a " style="left:930.10px;top:116.30px;width:0.80px;height:13.20px;background:#252525"></div>
<div class="a " style="left:946.10px;top:116.30px;width:0.80px;height:13.20px;background:#252525"></div>
<div class="a " style="left:962.30px;top:116.30px;width:0.80px;height:13.20px;background:#252525"></div>
<div class="a " style="left:978.10px;top:116.30px;width:0.80px;height:13.20px;background:#252525"></div>
<div class="a " style="left:994.10px;top:116.30px;width:0.80px;height:13.20px;background:#252525"></div>
<div class="a " style="left:1010.10px;top:116.30px;width:0.80px;height:13.20px;background:#252525"></div>
<svg class="a" style="left:868.10px;top:116.50px;opacity:0.72;" width="13" height="13" viewBox="0 0 13 13"><rect x="1" y="3.5" width="11" height="7.5" rx="1" fill="#888" stroke="#ccc" stroke-width="0.6"/><rect x="3" y="1.8" width="4" height="2" fill="#aaa"/><circle cx="6.5" cy="7.3" r="2.5" fill="#333" stroke="#ddd" stroke-width="0.6"/></svg>
<svg class="a" style="left:884.10px;top:116.50px;opacity:0.72;" width="13" height="13" viewBox="0 0 13 13"><rect x="4" y="4" width="8" height="8" fill="#8a8a8a" stroke="#444" stroke-width="0.5"/><rect x="2.5" y="2.5" width="8" height="8" fill="#9aa" stroke="#444" stroke-width="0.5"/><rect x="1" y="1" width="8" height="8" fill="#7a8a9a" stroke="#444" stroke-width="0.5"/></svg>
<svg class="a" style="left:900.10px;top:116.50px;opacity:0.72;" width="13" height="13" viewBox="0 0 13 13"><circle cx="3.2" cy="3" r="2" fill="#c8c890"/><circle cx="8.6" cy="4.6" r="3" fill="#4a6aa8"/><circle cx="8.4" cy="4" r="1.1" fill="#8aa8d8"/><circle cx="4.4" cy="9.2" r="2.8" fill="#c8c8c8"/></svg>
<svg class="a" style="left:916.00px;top:116.50px;opacity:0.72;" width="13" height="13" viewBox="0 0 13 13"><circle cx="6.5" cy="6.5" r="5.4" fill="#4e6e8a" stroke="#8a9aa8" stroke-width="0.8"/><path d="M3 5 Q5 3 7 4 Q8 6 6 6.5 Q4 8 3.5 7Z M8 7.5 Q10 7 10.5 9 Q9 10.5 8 10Z" fill="#3a5a62"/></svg>
<svg class="a" style="left:932.00px;top:116.50px;opacity:0.72;" width="13" height="13" viewBox="0 0 13 13"><g transform="translate(6.5,6.5) scale(0.95)"><path d="M0,-5.5 L5,-3 L0,-0.6 L-5,-3Z" fill="#f8c88a"/><path d="M-5,-3 L0,-0.6 L0,5.5 L-5,2.8Z" fill="#e8963a"/><path d="M5,-3 L0,-0.6 L0,5.5 L5,2.8Z" fill="#c8782a"/><path d="M0,-5.5 L5,-3 L5,2.8 L0,5.5 L-5,2.8 L-5,-3Z" fill="none" stroke="#7a4a18" stroke-width="0.6"/></g></svg>
<svg class="a" style="left:948.00px;top:116.50px;opacity:0.72;" width="13" height="13" viewBox="0 0 13 13"><g fill="none" stroke="#c8c8c8" stroke-width="1.7"><rect x="1" y="6" width="6.5" height="4" rx="2" transform="rotate(-35 4 8)"/><rect x="5.5" y="3" width="6.5" height="4" rx="2" transform="rotate(-35 9 5)"/></g></svg>
<svg class="a" style="left:964.20px;top:116.50px;" width="13" height="13" viewBox="0 0 13 13"><path d="M2 11.5 L7.2 6.2 A3 3 0 0 1 10.8 2 L9 3.8 L10 5 L11.8 3.2 A3 3 0 0 1 8.2 7.4 L3.2 12.5 Z" fill="#e8eef8" stroke="#3a5a9a" stroke-width="0.6"/></svg>
<svg class="a" style="left:980.00px;top:116.50px;opacity:0.72;" width="13" height="13" viewBox="0 0 13 13"><path d="M1.5 2.5 L11.5 2.5 L6.5 11 Z" fill="none" stroke="#aaa" stroke-width="0.9"/><circle cx="1.8" cy="2.5" r="1.2" fill="#d8a050"/><circle cx="11.2" cy="2.5" r="1.2" fill="#d8a050"/><circle cx="6.5" cy="11" r="1.2" fill="#d8a050"/></svg>
<svg class="a" style="left:996.00px;top:116.50px;opacity:0.72;" width="13" height="13" viewBox="0 0 13 13"><circle cx="6.5" cy="6.5" r="5.2" fill="#6a5a5a" stroke="#999" stroke-width="0.6"/><circle cx="5" cy="5" r="2" fill="#a89a9a" opacity="0.7"/></svg>
<svg class="a" style="left:1012.00px;top:116.50px;opacity:0.72;" width="13" height="13" viewBox="0 0 13 13"><rect x="1" y="1" width="12" height="12" fill="#e8d8d0"/><g fill="#b0483a"><rect x="1" y="1" width="3" height="3"/><rect x="7" y="1" width="3" height="3"/><rect x="4" y="4" width="3" height="3"/><rect x="10" y="4" width="3" height="3"/><rect x="1" y="7" width="3" height="3"/><rect x="7" y="7" width="3" height="3"/><rect x="4" y="10" width="3" height="3"/><rect x="10" y="10" width="3" height="3"/></g></svg>
<svg class="a" style="left:1012.00px;top:112.50px;" width="12" height="10" viewBox="0 0 12 10"><path d="M2 0L12 10M6 0L12 6" stroke="#999" stroke-width="1"/></svg>
<svg class="a" style="left:836.50px;top:142.00px;" width="13" height="13" viewBox="0 0 13 13"><g stroke="#3a3a3a" stroke-linecap="round" fill="none"><path d="M1 12 L5 8" stroke-width="2.2"/><path d="M3 5.5 L7.5 10" stroke-width="3"/><path d="M6.3 1.4 L11.6 6.7" stroke-width="3.2"/></g><path d="M5.2 5 L8 7.8 L10.3 5.5 L7.5 2.7 Z" fill="#e4e4e4" stroke="#3a3a3a" stroke-width="0.8"/><g stroke="#f0f0f0" stroke-linecap="round" fill="none"><path d="M1 12 L5 8" stroke-width="1.1"/><path d="M3 5.5 L7.5 10" stroke-width="1.7"/><path d="M6.3 1.4 L11.6 6.7" stroke-width="1.9"/></g></svg>
<svg class="a" style="left:854.50px;top:141.50px;" width="14" height="13" viewBox="0 0 14 13"><circle cx="3.2" cy="3" r="2.2" fill="#e0e0a0"/><circle cx="9" cy="4.8" r="3.2" fill="#5a8ad8"/><circle cx="8.8" cy="4.2" r="1.2" fill="#a8c8f8"/><circle cx="4.6" cy="9.6" r="3" fill="#ececec"/></svg>
<svg class="a" style="left:870.50px;top:144.50px;" width="5" height="7" viewBox="0 0 5 7"><path d="M0.5 0.5 L4 3.5 L0.5 6.5Z" fill="#333"/></svg>
<svg class="a" style="left:887.50px;top:141.50px;" width="13" height="13" viewBox="0 0 13 13"><g transform="translate(6.5,6.5) scale(1.0)"><path d="M0,-5.5 L5,-3 L0,-0.6 L-5,-3Z" fill="#f8c88a"/><path d="M-5,-3 L0,-0.6 L0,5.5 L-5,2.8Z" fill="#e8963a"/><path d="M5,-3 L0,-0.6 L0,5.5 L5,2.8Z" fill="#c8782a"/><path d="M0,-5.5 L5,-3 L5,2.8 L0,5.5 L-5,2.8 L-5,-3Z" fill="none" stroke="#7a4a18" stroke-width="0.6"/></g></svg>
<div class="t" style="left:903.00px;top:143.66px;font-size:9.5px;line-height:9.5px;letter-spacing:-0.539px;color:#111;">Plane</div>
<div class="a dd" style="left:835.30px;top:169.00px;width:186.00px;height:15.60px;"></div>
<div class="t" style="left:841.20px;top:173.46px;font-size:9.5px;line-height:9.5px;letter-spacing:-0.311px;color:#f2f2f2;">Add Modifier</div>
<svg class="a" style="left:1013.44px;top:172.96px;" width="5.120000000000001" height="7.680000000000001" viewBox="0 0 5.120000000000001 7.680000000000001"><path d="M2.5600000000000005,0 L5.120000000000001,2.8800000000000003 L0,2.8800000000000003Z M0,4.800000000000001 L5.120000000000001,4.800000000000001 L2.5600000000000005,7.680000000000001Z" fill="#bbb"/></svg>
<div class="a " style="left:835.30px;top:189.30px;width:186.00px;height:134.30px;border:1px solid #4c4c4c;border-radius:4px;background:#7a7a7a"></div>
<div class="a " style="left:836.30px;top:215.40px;width:184.00px;height:1.00px;background:#555"></div>
<div class="a " style="left:836.30px;top:190.30px;width:184.00px;height:25.10px;background:linear-gradient(#808080,#787878);border-radius:3px 3px 0 0"></div>
<svg class="a" style="left:839.80px;top:200.70px;" width="10" height="7" viewBox="0 0 10 7"><path d="M0.8 0.8 L9.2 0.8 L5 6.2 Z" fill="#ececec" stroke="#444" stroke-width="0.8"/></svg>
<svg class="a" style="left:859.50px;top:196.80px;" width="13" height="13" viewBox="0 0 13 13"><circle cx="6.5" cy="6.5" r="5.6" fill="#9a9a9a"/><circle cx="6.5" cy="6.5" r="4.6" fill="#3c6cbc" stroke="#2a4a8a" stroke-width="0.6"/><circle cx="5.3" cy="5" r="2" fill="#a8c4f0" opacity="0.85"/></svg>
<div class="a " style="left:873.00px;top:195.90px;width:21.50px;height:14.80px;border:1px solid #4a4a4a;border-radius:4px;background:linear-gradient(#b4b4b4,#c4c4c4)"></div>
<div class="t" style="left:879.00px;top:198.88px;font-size:9px;line-height:9px;letter-spacing:0.066px;color:#222;">urf</div>
<div class="a " style="left:900.50px;top:195.90px;width:15.50px;height:14.80px;border:1px solid #2a2a2a;border-radius:4px 0 0 4px;background:linear-gradient(#3a3a3a,#4a4a4a)"></div>
<div class="a " style="left:915.50px;top:195.90px;width:15.50px;height:14.80px;border:1px solid #2a2a2a;background:linear-gradient(#555,#666)"></div>
<div class="a " style="left:930.50px;top:195.90px;width:15.00px;height:14.80px;border:1px solid #3a3a3a;border-radius:0 4px 4px 0;background:linear-gradient(#a89e92,#968c80)"></div>
<svg class="a" style="left:902.00px;top:197.80px;" width="12" height="11" viewBox="0 0 12 11"><rect x="0.8" y="3" width="10.4" height="7" rx="1" fill="#dcdcdc" stroke="#111" stroke-width="0.6"/><rect x="0.8" y="0.8" width="10.4" height="2" fill="#eee"/><circle cx="6" cy="6.5" r="2.4" fill="#222"/><circle cx="6" cy="6.5" r="1" fill="#999"/></svg>
<svg class="a" style="left:916.80px;top:199.00px;" width="13" height="9" viewBox="0 0 13 9"><path d="M0.5 4.5 Q6.5 -0.6 12.5 4.5 Q6.5 9.6 0.5 4.5Z" fill="#f4f4f4" stroke="#333" stroke-width="0.6"/><circle cx="6.5" cy="4.5" r="2" fill="#222"/></svg>
<svg class="a" style="left:932.00px;top:197.30px;" width="12" height="12" viewBox="0 0 12 12"><path opacity="0.8" d="M2.5 2.5 H9.5 V9.5 H2.5Z M6 2.5 V9.5 M2.5 6 H9.5" fill="#d8c8a8" fill-opacity="0.5" stroke="#6a5a3a" stroke-width="0.7"/><g fill="#e8a858" opacity="0.85" stroke="#7a4a10" stroke-width="0.4"><circle cx="2.5" cy="2.5" r="1.3"/><circle cx="9.5" cy="2.5" r="1.3"/><circle cx="2.5" cy="9.5" r="1.3"/><circle cx="9.5" cy="9.5" r="1.3"/><circle cx="6" cy="6" r="1.3"/></g></svg>
<div class="a btn" style="left:967.80px;top:195.90px;width:13.80px;height:14.80px;border-radius:4px 0 0 4px"></div>
<div class="a btn" style="left:981.00px;top:195.90px;width:14.00px;height:14.80px;border-radius:0 4px 4px 0"></div>
<svg class="a" style="left:970.50px;top:199.80px;" width="8.5" height="7" viewBox="0 0 8.5 7"><path d="M4.25 0.8 L7.8 6 L0.7 6Z" fill="#eee" stroke="#333" stroke-width="0.8"/></svg>
<svg class="a" style="left:983.80px;top:200.30px;" width="8.5" height="7" viewBox="0 0 8.5 7"><path d="M0.7 0.8 L7.8 0.8 L4.25 6Z" fill="#eee" stroke="#333" stroke-width="0.8"/></svg>
<svg class="a" style="left:1004.30px;top:198.30px;" width="10" height="10" viewBox="0 0 10 10"><path d="M1.5 1.5L8.5 8.5M8.5 1.5L1.5 8.5" stroke="#333" stroke-width="3.2"/><path d="M2 2L8 8M8 2L2 8" stroke="#f4f4f4" stroke-width="1.7"/></svg>
<div class="a btn" style="left:839.00px;top:222.50px;width:86.00px;height:15.10px;"></div>
<div class="t" style="left:871.00px;top:225.51px;font-size:9.5px;line-height:9.5px;letter-spacing:-0.253px;color:#111;">Apply</div>
<div class="a btn" style="left:931.20px;top:222.50px;width:86.60px;height:15.10px;"></div>
<div class="t" style="left:964.00px;top:225.51px;font-size:9.5px;line-height:9.5px;letter-spacing:-0.294px;color:#111;">Copy</div>
<div class="a " style="left:839.00px;top:244.40px;width:89.30px;height:15.60px;border:1px solid #26304a;border-radius:4px 0 0 4px;background:linear-gradient(#4f7fd0,#5f90e0)"></div>
<div class="a " style="left:927.80px;top:244.40px;width:90.00px;height:15.60px;border:1px solid #262626;border-radius:0 4px 4px 0;background:linear-gradient(#555,#333)"></div>
<div class="t" style="left:856.50px;top:247.66px;font-size:9.5px;line-height:9.5px;letter-spacing:-0.233px;color:#0a0a14;">Catmull-Clark</div>
<div class="t" style="left:958.00px;top:247.66px;font-size:9.5px;line-height:9.5px;letter-spacing:-0.006px;color:#f4f4f4;">Simple</div>
<div class="t" style="left:845.20px;top:266.66px;font-size:9.5px;line-height:9.5px;letter-spacing:-0.359px;color:#111;">Subdivisions:</div>
<div class="t" style="left:938.00px;top:266.66px;font-size:9.5px;line-height:9.5px;letter-spacing:-0.310px;color:#111;">Options:</div>
<div class="a num" style="left:839.00px;top:281.30px;width:86.00px;height:14.70px;"></div>
<div class="t" style="left:867.50px;top:284.11px;font-size:9.5px;line-height:9.5px;letter-spacing:-0.140px;color:#111;">View: 2</div>
<svg class="a" style="left:845.00px;top:286.15px;" width="4" height="5" viewBox="0 0 4 5"><path d="M3.5 0.3 L0.5 2.5 L3.5 4.7Z" fill="#5a5a5a"/></svg>
<svg class="a" style="left:915.00px;top:286.15px;" width="4" height="5" viewBox="0 0 4 5"><path d="M0.5 0.3 L3.5 2.5 L0.5 4.7Z" fill="#5a5a5a"/></svg>
<div class="a num" style="left:839.00px;top:299.00px;width:86.00px;height:14.50px;"></div>
<div class="t" style="left:863.50px;top:301.71px;font-size:9.5px;line-height:9.5px;letter-spacing:-0.413px;color:#111;">Render: 2</div>
<svg class="a" style="left:845.00px;top:303.75px;" width="4" height="5" viewBox="0 0 4 5"><path d="M3.5 0.3 L0.5 2.5 L3.5 4.7Z" fill="#5a5a5a"/></svg>
<svg class="a" style="left:915.00px;top:303.75px;" width="4" height="5" viewBox="0 0 4 5"><path d="M0.5 0.3 L3.5 2.5 L0.5 4.7Z" fill="#5a5a5a"/></svg>
<div class="a " style="left:934.30px;top:282.80px;width:11.00px;height:11.00px;border:1px solid #2a2a2a;border-radius:3px;background:linear-gradient(#3e3e3e,#555)"></div>
<svg class="a" style="left:935.30px;top:281.30px;" width="12" height="12" viewBox="0 0 12 12"><path d="M2 6.5 L5 10 L11 1.5" stroke="#f4f4f4" stroke-width="2" fill="none"/></svg>
<div class="t" style="left:952.00px;top:283.76px;font-size:9.5px;line-height:9.5px;letter-spacing:-0.408px;color:#f4f4f4;">Subdivide UVs</div>
<div class="a " style="left:934.30px;top:300.80px;width:11.00px;height:11.00px;border:1px solid #333;border-radius:3px;background:linear-gradient(#505050,#5e5e5e)"></div>
<div class="t" style="left:952.00px;top:301.76px;font-size:9.5px;line-height:9.5px;letter-spacing:-0.201px;color:#111;">Optimal Display</div>
<div class="a " style="left:835.30px;top:328.40px;width:186.00px;height:98.90px;border:1px solid #4c4c4c;border-radius:4px;background:#7a7a7a"></div>
<div class="a " style="left:836.30px;top:353.60px;width:184.00px;height:1.00px;background:#555"></div>
<div class="a " style="left:836.30px;top:329.40px;width:184.00px;height:24.20px;background:linear-gradient(#808080,#787878);border-radius:3px 3px 0 0"></div>
<svg class="a" style="left:839.80px;top:340.00px;" width="10" height="7" viewBox="0 0 10 7"><path d="M0.8 0.8 L9.2 0.8 L5 6.2 Z" fill="#ececec" stroke="#444" stroke-width="0.8"/></svg>
<svg class="a" style="left:859.50px;top:336.10px;" width="13" height="13" viewBox="0 0 13 13"><path d="M6.5,1 L12,3.8 L6.5,6.4 L1,3.8Z" fill="#a8c4f0"/><path d="M1,3.8 L6.5,6.4 L6.5,12.4 L1,9.6Z" fill="#4a78c8"/><path d="M12,3.8 L6.5,6.4 L6.5,12.4 L12,9.6Z" fill="#3a62a8"/><path d="M6.5,1 L12,3.8 L12,9.6 L6.5,12.4 L1,9.6 L1,3.8Z" fill="none" stroke="#2a4a8a" stroke-width="0.6"/></svg>
<div class="a " style="left:873.00px;top:335.20px;width:21.50px;height:14.80px;border:1px solid #4a4a4a;border-radius:4px;background:linear-gradient(#b4b4b4,#c4c4c4)"></div>
<div class="t" style="left:877.50px;top:338.18px;font-size:9px;line-height:9px;letter-spacing:0.374px;color:#222;">plit</div>
<div class="a " style="left:900.50px;top:335.20px;width:15.50px;height:14.80px;border:1px solid #2a2a2a;border-radius:4px 0 0 4px;background:linear-gradient(#3a3a3a,#4a4a4a)"></div>
<div class="a " style="left:915.50px;top:335.20px;width:15.50px;height:14.80px;border:1px solid #2a2a2a;background:linear-gradient(#555,#666)"></div>
<div class="a " style="left:930.50px;top:335.20px;width:15.00px;height:14.80px;border:1px solid #3a3a3a;border-radius:0 4px 4px 0;background:linear-gradient(#a89e92,#968c80)"></div>
<svg class="a" style="left:902.00px;top:337.10px;" width="12" height="11" viewBox="0 0 12 11"><rect x="0.8" y="3" width="10.4" height="7" rx="1" fill="#dcdcdc" stroke="#111" stroke-width="0.6"/><rect x="0.8" y="0.8" width="10.4" height="2" fill="#eee"/><circle cx="6" cy="6.5" r="2.4" fill="#222"/><circle cx="6" cy="6.5" r="1" fill="#999"/></svg>
<svg class="a" style="left:916.80px;top:338.30px;" width="13" height="9" viewBox="0 0 13 9"><path d="M0.5 4.5 Q6.5 -0.6 12.5 4.5 Q6.5 9.6 0.5 4.5Z" fill="#f4f4f4" stroke="#333" stroke-width="0.6"/><circle cx="6.5" cy="4.5" r="2" fill="#222"/></svg>
<svg class="a" style="left:932.00px;top:336.60px;" width="12" height="12" viewBox="0 0 12 12"><path opacity="0.8" d="M2.5 2.5 H9.5 V9.5 H2.5Z M6 2.5 V9.5 M2.5 6 H9.5" fill="#d8c8a8" fill-opacity="0.5" stroke="#6a5a3a" stroke-width="0.7"/><g fill="#e8a858" opacity="0.85" stroke="#7a4a10" stroke-width="0.4"><circle cx="2.5" cy="2.5" r="1.3"/><circle cx="9.5" cy="2.5" r="1.3"/><circle cx="2.5" cy="9.5" r="1.3"/><circle cx="9.5" cy="9.5" r="1.3"/><circle cx="6" cy="6" r="1.3"/></g></svg>
<div class="a btn" style="left:967.80px;top:335.20px;width:13.80px;height:14.80px;border-radius:4px 0 0 4px"></div>
<div class="a btn" style="left:981.00px;top:335.20px;width:14.00px;height:14.80px;border-radius:0 4px 4px 0"></div>
<svg class="a" style="left:970.50px;top:339.10px;" width="8.5" height="7" viewBox="0 0 8.5 7"><path d="M4.25 0.8 L7.8 6 L0.7 6Z" fill="#eee" stroke="#333" stroke-width="0.8"/></svg>
<svg class="a" style="left:983.80px;top:339.60px;" width="8.5" height="7" viewBox="0 0 8.5 7"><path d="M0.7 0.8 L7.8 0.8 L4.25 6Z" fill="#eee" stroke="#333" stroke-width="0.8"/></svg>
<svg class="a" style="left:1004.30px;top:337.60px;" width="10" height="10" viewBox="0 0 10 10"><path d="M1.5 1.5L8.5 8.5M8.5 1.5L1.5 8.5" stroke="#333" stroke-width="3.2"/><path d="M2 2L8 8M8 2L2 8" stroke="#f4f4f4" stroke-width="1.7"/></svg>
<div class="a btn" style="left:839.00px;top:361.90px;width:86.00px;height:14.70px;"></div>
<div class="t" style="left:871.00px;top:364.71px;font-size:9.5px;line-height:9.5px;letter-spacing:-0.253px;color:#111;">Apply</div>
<div class="a btn" style="left:931.20px;top:361.90px;width:86.60px;height:14.70px;"></div>
<div class="t" style="left:964.00px;top:364.71px;font-size:9.5px;line-height:9.5px;letter-spacing:-0.294px;color:#111;">Copy</div>
<div class="a " style="left:841.80px;top:386.70px;width:11.00px;height:11.00px;border:1px solid #333;border-radius:3px;background:linear-gradient(#505050,#5e5e5e)"></div>
<div class="t" style="left:859.00px;top:387.66px;font-size:9.5px;line-height:9.5px;letter-spacing:-0.480px;color:#111;">Edge Angle</div>
<div class="a " style="left:934.30px;top:386.70px;width:11.00px;height:11.00px;border:1px solid #2a2a2a;border-radius:3px;background:linear-gradient(#3e3e3e,#555)"></div>
<svg class="a" style="left:935.30px;top:385.20px;" width="12" height="12" viewBox="0 0 12 12"><path d="M2 6.5 L5 10 L11 1.5" stroke="#f4f4f4" stroke-width="2" fill="none"/></svg>
<div class="t" style="left:952.00px;top:387.66px;font-size:9.5px;line-height:9.5px;letter-spacing:-0.629px;color:#f4f4f4;">Sharp Edges</div>
<div class="a num" style="left:839.00px;top:402.20px;width:86.00px;height:15.00px;background:linear-gradient(#8a8a8a,#969696);border-color:#606060;"></div>
<div class="t" style="left:849.50px;top:405.16px;font-size:9.5px;line-height:9.5px;letter-spacing:-0.189px;color:#5e5e5e;">Split Ang: 30°</div>
<svg class="a" style="left:845.00px;top:407.20px;" width="4" height="5" viewBox="0 0 4 5"><path d="M3.5 0.3 L0.5 2.5 L3.5 4.7Z" fill="#7e7e7e"/></svg>
<svg class="a" style="left:915.00px;top:407.20px;" width="4" height="5" viewBox="0 0 4 5"><path d="M0.5 0.3 L3.5 2.5 L0.5 4.7Z" fill="#7e7e7e"/></svg>
<div class="a" style="left:-8px;top:495px;width:836px;height:90px;overflow:hidden"><div class="a" style="left:8px;top:-495px;width:1024px;height:576px">
<div class="a dd" style="left:6.00px;top:506.70px;width:23.50px;height:15.80px;"></div>
<svg class="a" style="left:9.00px;top:509.50px;" width="12" height="11" viewBox="0 0 12 11"><rect x="0.5" y="0.5" width="11" height="10" fill="#ececec" stroke="#666" stroke-width="0.6"/><rect x="1.2" y="1.2" width="9.6" height="4.8" fill="#e0a8b4"/><path d="M1.2 6.8 L3.5 5 L5.5 6.2 L8 4.6 L10.8 6.6 V8 H1.2Z" fill="#3a2c3c"/><rect x="1.2" y="8" width="9.6" height="1.8" fill="#b8c4e0"/></svg>
<svg class="a" style="left:22.28px;top:510.92px;" width="5.44" height="8.16" viewBox="0 0 5.44 8.16"><path d="M2.72,0 L5.44,3.06 L0,3.06Z M0,5.1 L5.44,5.1 L2.72,8.16Z" fill="#ccc"/></svg>
<svg class="a" style="left:36.00px;top:511.30px;" width="8" height="8" viewBox="0 0 8 8"><circle cx="4" cy="4" r="3.3" fill="#9a9a9a" stroke="#555" stroke-width="0.8"/><path d="M2.3 4H5.7" stroke="#444" stroke-width="1"/></svg>
<div class="t" style="left:55.00px;top:510.56px;font-size:9.5px;line-height:9.5px;letter-spacing:-0.105px;color:#111;">View</div>
<div class="t" style="left:86.00px;top:510.56px;font-size:9.5px;line-height:9.5px;letter-spacing:-0.280px;color:#111;">Image</div>
<div class="a dd" style="left:122.00px;top:506.70px;width:26.00px;height:15.80px;border-radius:4px 0 0 4px"></div>
<svg class="a" style="left:125.50px;top:509.50px;" width="12" height="11" viewBox="0 0 12 11"><rect x="0.5" y="0.5" width="11" height="10" fill="#ececec" stroke="#666" stroke-width="0.6"/><rect x="1.2" y="1.2" width="9.6" height="4.8" fill="#e0a8b4"/><path d="M1.2 6.8 L3.5 5 L5.5 6.2 L8 4.6 L10.8 6.6 V8 H1.2Z" fill="#3a2c3c"/><rect x="1.2" y="8" width="9.6" height="1.8" fill="#b8c4e0"/></svg>
<svg class="a" style="left:140.28px;top:510.92px;" width="5.44" height="8.16" viewBox="0 0 5.44 8.16"><path d="M2.72,0 L5.44,3.06 L0,3.06Z M0,5.1 L5.44,5.1 L2.72,8.16Z" fill="#ccc"/></svg>
<div class="a fld" style="left:147.50px;top:506.70px;width:96.50px;height:15.80px;"></div>
<div class="t" style="left:153.00px;top:510.56px;font-size:9.5px;line-height:9.5px;letter-spacing:-0.183px;color:#111;">pencil_color</div>
<div class="a btn" style="left:243.50px;top:506.70px;width:15.50px;height:15.80px;border-radius:0"></div>
<div class="t" style="left:248.30px;top:510.56px;font-size:9.5px;line-height:9.5px;letter-spacing:-1.102px;color:#111;">F</div>
<div class="a btn" style="left:258.50px;top:506.70px;width:17.00px;height:15.80px;border-radius:0;background:linear-gradient(#a8a8a8,#8e8e8e)"></div>
<svg class="a" style="left:262.00px;top:509.60px;" width="10" height="10" viewBox="0 0 10 10"><path d="M5 0.5V9.5M0.5 5H9.5" stroke="#333" stroke-width="3"/><path d="M5 1V9M1 5H9" stroke="#f2f2f2" stroke-width="1.6"/></svg>
<div class="a btn" style="left:275.00px;top:506.70px;width:16.00px;height:15.80px;border-radius:0 4px 4px 0;background:linear-gradient(#a8a8a8,#8e8e8e)"></div>
<svg class="a" style="left:278.00px;top:509.60px;" width="10" height="10" viewBox="0 0 10 10"><path d="M1.3 1.3L8.7 8.7M8.7 1.3L1.3 8.7" stroke="#333" stroke-width="3"/><path d="M1.8 1.8L8.2 8.2M8.2 1.8L1.8 8.2" stroke="#f2f2f2" stroke-width="1.5"/></svg>
<div class="a btn" style="left:295.00px;top:506.70px;width:17.50px;height:15.80px;"></div>
<svg class="a" style="left:297.50px;top:508.50px;" width="13" height="13" viewBox="0 0 13 13"><g stroke="#3a3a3a" stroke-linecap="round" fill="none"><path d="M1 12 L5 8" stroke-width="2.2"/><path d="M3 5.5 L7.5 10" stroke-width="3"/><path d="M6.3 1.4 L11.6 6.7" stroke-width="3.2"/></g><path d="M5.2 5 L8 7.8 L10.3 5.5 L7.5 2.7 Z" fill="#e4e4e4" stroke="#3a3a3a" stroke-width="0.8"/><g stroke="#f0f0f0" stroke-linecap="round" fill="none"><path d="M1 12 L5 8" stroke-width="1.1"/><path d="M3 5.5 L7.5 10" stroke-width="1.7"/><path d="M6.3 1.4 L11.6 6.7" stroke-width="1.9"/></g></svg>
<div class="a dd" style="left:316.00px;top:506.70px;width:49.50px;height:15.80px;"></div>
<svg class="a" style="left:319.50px;top:509.50px;" width="12" height="11" viewBox="0 0 12 11"><rect x="0.5" y="0.5" width="11" height="10" fill="#ececec" stroke="#666" stroke-width="0.6"/><rect x="1.2" y="1.2" width="9.6" height="4.8" fill="#e0a8b4"/><path d="M1.2 6.8 L3.5 5 L5.5 6.2 L8 4.6 L10.8 6.6 V8 H1.2Z" fill="#3a2c3c"/><rect x="1.2" y="8" width="9.6" height="1.8" fill="#b8c4e0"/></svg>
<div class="t" style="left:335.00px;top:510.56px;font-size:9.5px;line-height:9.5px;letter-spacing:-0.105px;color:#f0f0f0;">View</div>
<svg class="a" style="left:357.28px;top:510.92px;" width="5.44" height="8.16" viewBox="0 0 5.44 8.16"><path d="M2.72,0 L5.44,3.06 L0,3.06Z M0,5.1 L5.44,5.1 L2.72,8.16Z" fill="#ccc"/></svg>
<div class="a " style="left:372.50px;top:506.70px;width:17.00px;height:15.80px;border:1px solid #26304a;border-radius:4px 0 0 4px;background:linear-gradient(#4f7fd0,#5f90e0)"></div>
<div class="a " style="left:389.00px;top:506.70px;width:16.50px;height:15.80px;border:1px solid #262626;background:linear-gradient(#4a4a4a,#3a3a3a)"></div>
<div class="a " style="left:405.00px;top:506.70px;width:16.50px;height:15.80px;border:1px solid #262626;border-radius:0 4px 4px 0;background:linear-gradient(#4a4a4a,#3a3a3a)"></div>
<svg class="a" style="left:375.00px;top:509.00px;" width="12" height="12" viewBox="0 0 12 12"><rect x="0.5" y="0.5" width="11" height="11" fill="#e8ecf4"/><g fill="#c04858"><rect x="0.5" y="0.5" width="2.75" height="2.75"/><rect x="6" y="0.5" width="2.75" height="2.75"/><rect x="3.25" y="3.25" width="2.75" height="2.75"/><rect x="8.75" y="3.25" width="2.75" height="2.75"/></g><path d="M0.5 11.5 L11.5 0.5 L11.5 11.5Z" fill="#5a6ab8" opacity="0.75"/></svg>
<svg class="a" style="left:391.50px;top:509.00px;" width="12" height="12" viewBox="0 0 12 12"><rect x="0.5" y="0.5" width="11" height="11" fill="#a89896"/><g fill="#7a4a4a"><rect x="0.5" y="0.5" width="3.7" height="3.7"/><rect x="7.8" y="0.5" width="3.7" height="3.7"/><rect x="4.2" y="4.2" width="3.6" height="3.6"/><rect x="0.5" y="7.8" width="3.7" height="3.7"/><rect x="7.8" y="7.8" width="3.7" height="3.7"/></g></svg>
<svg class="a" style="left:407.50px;top:509.00px;" width="12" height="12" viewBox="0 0 12 12"><rect x="0.5" y="0.5" width="11" height="11" fill="#1e1e1e"/><path d="M0.5 0.5 L11.5 0.5 L0.5 11.5Z" fill="#a8a8a8"/></svg>
<div class="a dd" style="left:511.00px;top:506.10px;width:80.50px;height:16.40px;border-radius:0 4px 4px 0;border-left:0"></div>
<svg class="a" style="left:511.00px;top:508.50px;" width="12" height="13" viewBox="0 0 12 13"><g transform="translate(5,6.5) scale(1.0)"><path d="M0,-5.5 L5,-3 L0,-0.6 L-5,-3Z" fill="#f8c88a"/><path d="M-5,-3 L0,-0.6 L0,5.5 L-5,2.8Z" fill="#e8963a"/><path d="M5,-3 L0,-0.6 L0,5.5 L5,2.8Z" fill="#c8782a"/><path d="M0,-5.5 L5,-3 L5,2.8 L0,5.5 L-5,2.8 L-5,-3Z" fill="none" stroke="#7a4a18" stroke-width="0.6"/></g></svg>
<div class="t" style="left:524.00px;top:509.96px;font-size:9.5px;line-height:9.5px;letter-spacing:-0.278px;color:#f0f0f0;">Object Mode</div>
<svg class="a" style="left:583.78px;top:510.92px;" width="5.44" height="8.16" viewBox="0 0 5.44 8.16"><path d="M2.72,0 L5.44,3.06 L0,3.06Z M0,5.1 L5.44,5.1 L2.72,8.16Z" fill="#ccc"/></svg>
<div class="a dd" style="left:595.70px;top:506.70px;width:28.10px;height:15.80px;"></div>
<svg class="a" style="left:600.00px;top:509.30px;" width="11" height="11" viewBox="0 0 11 11"><circle cx="5.5" cy="5.5" r="5" fill="#f2f2f2" stroke="#8a2a2a" stroke-width="0.6"/><g fill="none" stroke="#cc3a3a" stroke-width="2.2"><path d="M4.1 1.9 A3.8 3.8 0 0 1 6.9 1.9"/><path d="M9.1 4.1 A3.8 3.8 0 0 1 9.1 6.9"/><path d="M6.9 9.1 A3.8 3.8 0 0 1 4.1 9.1"/><path d="M1.9 6.9 A3.8 3.8 0 0 1 1.9 4.1"/></g><circle cx="5.5" cy="5.5" r="1.3" fill="#cc3a3a"/></svg>
<svg class="a" style="left:615.78px;top:510.92px;" width="5.44" height="8.16" viewBox="0 0 5.44 8.16"><path d="M2.72,0 L5.44,3.06 L0,3.06Z M0,5.1 L5.44,5.1 L2.72,8.16Z" fill="#ccc"/></svg>
<div class="a dd" style="left:628.00px;top:506.70px;width:28.00px;height:15.80px;border-radius:4px 0 0 4px"></div>
<svg class="a" style="left:631.00px;top:509.00px;" width="13" height="12" viewBox="0 0 13 12"><circle cx="4.2" cy="4.2" r="3.6" fill="#6a9ae0" stroke="#2a4a8a" stroke-width="0.5"/><circle cx="3.2" cy="3.2" r="1.3" fill="#cfe0fa"/><circle cx="8.4" cy="7.6" r="3.6" fill="#e4e4e4" stroke="#777" stroke-width="0.5"/></svg>
<svg class="a" style="left:648.28px;top:510.92px;" width="5.44" height="8.16" viewBox="0 0 5.44 8.16"><path d="M2.72,0 L5.44,3.06 L0,3.06Z M0,5.1 L5.44,5.1 L2.72,8.16Z" fill="#ccc"/></svg>
<div class="a " style="left:655.50px;top:506.70px;width:16.50px;height:15.80px;border:1px solid #26304a;border-radius:0 4px 4px 0;background:linear-gradient(#8a9ebc,#9cb0d0)"></div>
<svg class="a" style="left:657.50px;top:509.00px;" width="13" height="12" viewBox="0 0 13 12"><g fill="none" stroke="#3c5ea8" stroke-width="0.9"><circle cx="2.5" cy="2.5" r="1.7"/><circle cx="6.5" cy="2.5" r="1.7"/><circle cx="10.5" cy="2.5" r="1.7"/><path d="M1.5 8.5 H11.5 M1.5 8.5 L3.5 6.5 M1.5 8.5 L3.5 10.5 M11.5 8.5 L9.5 6.5 M11.5 8.5 L9.5 10.5"/></g></svg>
<div class="a btn" style="left:676.00px;top:506.70px;width:15.50px;height:15.80px;border-radius:4px 0 0 4px;background:linear-gradient(#b4b4b4,#a0a0a0)"></div>
<svg class="a" style="left:677.50px;top:508.50px;" width="13" height="13" viewBox="0 0 13 13"><path d="M6.5 7.5 V1" stroke="#3a5ad0" stroke-width="1.8"/><path d="M6.5 7.5 L1.5 11.5" stroke="#d03030" stroke-width="1.8"/><path d="M6.5 7.5 L11.5 11.5" stroke="#30a030" stroke-width="1.8"/></svg>
<div class="a dd" style="left:691.00px;top:506.70px;width:59.00px;height:15.80px;border-radius:0 4px 4px 0"></div>
<div class="t" style="left:698.00px;top:509.96px;font-size:9.5px;line-height:9.5px;letter-spacing:-0.410px;color:#f0f0f0;">Global</div>
<svg class="a" style="left:742.28px;top:510.92px;" width="5.44" height="8.16" viewBox="0 0 5.44 8.16"><path d="M2.72,0 L5.44,3.06 L0,3.06Z M0,5.1 L5.44,5.1 L2.72,8.16Z" fill="#ccc"/></svg>
<div class="a " style="left:754.00px;top:506.60px;width:40.00px;height:15.20px;border:1px solid #3a3a3a;border-radius:3px;background:#8e8e8e;overflow:hidden"></div>
<div class="a " style="left:761.60px;top:507.00px;width:0.80px;height:14.40px;background:#404040"></div>
<div class="a " style="left:769.60px;top:507.00px;width:0.80px;height:14.40px;background:#404040"></div>
<div class="a " style="left:777.60px;top:507.00px;width:0.80px;height:14.40px;background:#404040"></div>
<div class="a " style="left:785.60px;top:507.00px;width:0.80px;height:14.40px;background:#404040"></div>
<div class="a " style="left:754.50px;top:513.80px;width:39.00px;height:0.80px;background:#404040"></div>
<div class="a " style="left:798.00px;top:506.60px;width:40.00px;height:15.20px;border:1px solid #3a3a3a;border-radius:3px;background:#8e8e8e;overflow:hidden"></div>
<div class="a " style="left:805.60px;top:507.00px;width:0.80px;height:14.40px;background:#404040"></div>
<div class="a " style="left:813.60px;top:507.00px;width:0.80px;height:14.40px;background:#404040"></div>
<div class="a " style="left:821.60px;top:507.00px;width:0.80px;height:14.40px;background:#404040"></div>
<div class="a " style="left:829.60px;top:507.00px;width:0.80px;height:14.40px;background:#404040"></div>
<div class="a " style="left:798.50px;top:513.80px;width:39.00px;height:0.80px;background:#404040"></div>
<svg class="a" style="left:756.20px;top:508.60px;" width="4" height="4" viewBox="0 0 4 4"><circle cx="2" cy="2" r="1.6" fill="#f0a040" stroke="#6a3a00" stroke-width="0.5"/></svg>
<div class="a " style="left:-8.00px;top:524.60px;width:836.00px;height:19.40px;background:#4c4c4c"></div>
<div class="a " style="left:142.41px;top:525.00px;width:604.09px;height:19.00px;background:#767676"></div>
<div class="a " style="left:21.05px;top:525.00px;width:0.80px;height:19.00px;background:rgba(50,50,50,0.16)"></div>
<div class="a " style="left:45.12px;top:525.00px;width:0.80px;height:19.00px;background:rgba(50,50,50,0.32)"></div>
<div class="a " style="left:69.19px;top:525.00px;width:0.80px;height:19.00px;background:rgba(50,50,50,0.16)"></div>
<div class="a " style="left:93.26px;top:525.00px;width:0.80px;height:19.00px;background:rgba(50,50,50,0.32)"></div>
<div class="a " style="left:117.33px;top:525.00px;width:0.80px;height:19.00px;background:rgba(50,50,50,0.16)"></div>
<div class="a " style="left:141.40px;top:525.00px;width:0.80px;height:19.00px;background:rgba(50,50,50,0.32)"></div>
<div class="a " style="left:165.47px;top:525.00px;width:0.80px;height:19.00px;background:rgba(50,50,50,0.16)"></div>
<div class="a " style="left:189.54px;top:525.00px;width:0.80px;height:19.00px;background:rgba(50,50,50,0.32)"></div>
<div class="a " style="left:213.61px;top:525.00px;width:0.80px;height:19.00px;background:rgba(50,50,50,0.16)"></div>
<div class="a " style="left:237.68px;top:525.00px;width:0.80px;height:19.00px;background:rgba(50,50,50,0.32)"></div>
<div class="a " style="left:261.75px;top:525.00px;width:0.80px;height:19.00px;background:rgba(50,50,50,0.16)"></div>
<div class="a " style="left:285.82px;top:525.00px;width:0.80px;height:19.00px;background:rgba(50,50,50,0.32)"></div>
<div class="a " style="left:309.89px;top:525.00px;width:0.80px;height:19.00px;background:rgba(50,50,50,0.16)"></div>
<div class="a " style="left:333.96px;top:525.00px;width:0.80px;height:19.00px;background:rgba(50,50,50,0.32)"></div>
<div class="a " style="left:358.03px;top:525.00px;width:0.80px;height:19.00px;background:rgba(50,50,50,0.16)"></div>
<div class="a " style="left:382.10px;top:525.00px;width:0.80px;height:19.00px;background:rgba(50,50,50,0.32)"></div>
<div class="a " style="left:406.17px;top:525.00px;width:0.80px;height:19.00px;background:rgba(50,50,50,0.16)"></div>
<div class="a " style="left:430.24px;top:525.00px;width:0.80px;height:19.00px;background:rgba(50,50,50,0.32)"></div>
<div class="a " style="left:454.31px;top:525.00px;width:0.80px;height:19.00px;background:rgba(50,50,50,0.16)"></div>
<div class="a " style="left:478.38px;top:525.00px;width:0.80px;height:19.00px;background:rgba(50,50,50,0.32)"></div>
<div class="a " style="left:502.45px;top:525.00px;width:0.80px;height:19.00px;background:rgba(50,50,50,0.16)"></div>
<div class="a " style="left:526.52px;top:525.00px;width:0.80px;height:19.00px;background:rgba(50,50,50,0.32)"></div>
<div class="a " style="left:550.59px;top:525.00px;width:0.80px;height:19.00px;background:rgba(50,50,50,0.16)"></div>
<div class="a " style="left:574.66px;top:525.00px;width:0.80px;height:19.00px;background:rgba(50,50,50,0.32)"></div>
<div class="a " style="left:598.73px;top:525.00px;width:0.80px;height:19.00px;background:rgba(50,50,50,0.16)"></div>
<div class="a " style="left:622.80px;top:525.00px;width:0.80px;height:19.00px;background:rgba(50,50,50,0.32)"></div>
<div class="a " style="left:646.87px;top:525.00px;width:0.80px;height:19.00px;background:rgba(50,50,50,0.16)"></div>
<div class="a " style="left:670.94px;top:525.00px;width:0.80px;height:19.00px;background:rgba(50,50,50,0.32)"></div>
<div class="a " style="left:695.01px;top:525.00px;width:0.80px;height:19.00px;background:rgba(50,50,50,0.16)"></div>
<div class="a " style="left:719.08px;top:525.00px;width:0.80px;height:19.00px;background:rgba(50,50,50,0.32)"></div>
<div class="a " style="left:743.15px;top:525.00px;width:0.80px;height:19.00px;background:rgba(50,50,50,0.16)"></div>
<div class="a " style="left:767.22px;top:525.00px;width:0.80px;height:19.00px;background:rgba(50,50,50,0.32)"></div>
<div class="a " style="left:791.29px;top:525.00px;width:0.80px;height:19.00px;background:rgba(50,50,50,0.16)"></div>
<div class="a " style="left:815.36px;top:525.00px;width:0.80px;height:19.00px;background:rgba(50,50,50,0.32)"></div>
<div class="a " style="left:139.60px;top:525.00px;width:1.00px;height:19.00px;background:#2a3a2a"></div>
<div class="a " style="left:140.40px;top:525.00px;width:2.40px;height:19.00px;background:#58b048"></div>
<svg class="a" style="left:817.00px;top:525.50px;" width="11" height="10" viewBox="0 0 11 10"><path d="M1 0L11 10M5 0L11 6" stroke="#888" stroke-width="1"/></svg>
<div class="a " style="left:-8.00px;top:544.00px;width:836.00px;height:11.50px;background:#6e6e6e"></div>
<div class="a " style="left:3.00px;top:544.60px;width:821.00px;height:9.40px;background:linear-gradient(#8c8c8c,#808080);border:1px solid #585858;border-radius:5px"></div>
<svg class="a" style="left:4.50px;top:545.30px;" width="8" height="8" viewBox="0 0 8 8"><circle cx="4" cy="4" r="3" fill="#7a7a7a" stroke="#5e5e5e" stroke-width="0.8"/></svg>
<svg class="a" style="left:814.30px;top:545.30px;" width="8" height="8" viewBox="0 0 8 8"><circle cx="4" cy="4" r="3" fill="#7a7a7a" stroke="#5e5e5e" stroke-width="0.8"/></svg>
<div class="t" style="left:35.46px;top:544.36px;font-size:9.5px;line-height:9.5px;letter-spacing:0.400px;color:#1a1a1a;">-40</div>
<div class="t" style="left:83.60px;top:544.36px;font-size:9.5px;line-height:9.5px;letter-spacing:0.400px;color:#1a1a1a;">-20</div>
<div class="t" style="left:138.16px;top:544.36px;font-size:9.5px;line-height:9.5px;letter-spacing:0.400px;color:#1a1a1a;">0</div>
<div class="t" style="left:183.46px;top:544.36px;font-size:9.5px;line-height:9.5px;letter-spacing:0.400px;color:#1a1a1a;">20</div>
<div class="t" style="left:231.60px;top:544.36px;font-size:9.5px;line-height:9.5px;letter-spacing:0.400px;color:#1a1a1a;">40</div>
<div class="t" style="left:279.74px;top:544.36px;font-size:9.5px;line-height:9.5px;letter-spacing:0.400px;color:#1a1a1a;">60</div>
<div class="t" style="left:327.88px;top:544.36px;font-size:9.5px;line-height:9.5px;letter-spacing:0.400px;color:#1a1a1a;">80</div>
<div class="t" style="left:373.18px;top:544.36px;font-size:9.5px;line-height:9.5px;letter-spacing:0.400px;color:#1a1a1a;">100</div>
<div class="t" style="left:421.32px;top:544.36px;font-size:9.5px;line-height:9.5px;letter-spacing:0.400px;color:#1a1a1a;">120</div>
<div class="t" style="left:469.46px;top:544.36px;font-size:9.5px;line-height:9.5px;letter-spacing:0.400px;color:#1a1a1a;">140</div>
<div class="t" style="left:517.60px;top:544.36px;font-size:9.5px;line-height:9.5px;letter-spacing:0.400px;color:#1a1a1a;">160</div>
<div class="t" style="left:565.74px;top:544.36px;font-size:9.5px;line-height:9.5px;letter-spacing:0.400px;color:#1a1a1a;">180</div>
<div class="t" style="left:613.88px;top:544.36px;font-size:9.5px;line-height:9.5px;letter-spacing:0.400px;color:#1a1a1a;">200</div>
<div class="t" style="left:662.02px;top:544.36px;font-size:9.5px;line-height:9.5px;letter-spacing:0.400px;color:#1a1a1a;">220</div>
<div class="t" style="left:710.16px;top:544.36px;font-size:9.5px;line-height:9.5px;letter-spacing:0.400px;color:#1a1a1a;">240</div>
<div class="t" style="left:758.30px;top:544.36px;font-size:9.5px;line-height:9.5px;letter-spacing:0.400px;color:#1a1a1a;">260</div>
<div class="a " style="left:-8.00px;top:555.50px;width:836.00px;height:28.50px;background:linear-gradient(#777,#707070)"></div>
<div class="a dd" style="left:6.00px;top:560.20px;width:23.50px;height:19.80px;"></div>
<svg class="a" style="left:9.00px;top:562.00px;" width="13" height="13" viewBox="0 0 13 13"><circle cx="6.5" cy="6.5" r="5.6" fill="#f0f0f0" stroke="#555" stroke-width="0.8"/><path d="M6.5 6.5 L6.5 2.5 M6.5 6.5 L9.5 8" stroke="#333" stroke-width="1"/><path d="M6.5 6.5 L2 9 A5 5 0 0 0 6.5 11.8Z" fill="#e07030"/></svg>
<svg class="a" style="left:22.28px;top:563.92px;" width="5.44" height="8.16" viewBox="0 0 5.44 8.16"><path d="M2.72,0 L5.44,3.06 L0,3.06Z M0,5.1 L5.44,5.1 L2.72,8.16Z" fill="#ccc"/></svg>
<svg class="a" style="left:36.00px;top:564.40px;" width="8" height="8" viewBox="0 0 8 8"><circle cx="4" cy="4" r="3.3" fill="#9a9a9a" stroke="#555" stroke-width="0.8"/><path d="M2.3 4H5.7" stroke="#444" stroke-width="1"/></svg>
<div class="t" style="left:55.00px;top:563.76px;font-size:9.5px;line-height:9.5px;letter-spacing:-0.105px;color:#111;">View</div>
<div class="t" style="left:86.50px;top:563.76px;font-size:9.5px;line-height:9.5px;letter-spacing:-0.176px;color:#111;">Marker</div>
<div class="t" style="left:127.00px;top:563.76px;font-size:9.5px;line-height:9.5px;letter-spacing:-0.389px;color:#111;">Frame</div>
<div class="t" style="left:165.00px;top:563.76px;font-size:9.5px;line-height:9.5px;letter-spacing:-0.318px;color:#111;">Playback</div>
<div class="a btn" style="left:212.00px;top:560.20px;width:14.50px;height:19.80px;"></div>
<svg class="a" style="left:213.50px;top:562.00px;" width="12" height="12" viewBox="0 0 12 12"><circle cx="6" cy="6" r="5" fill="#f4e8d8" stroke="#8a5a20" stroke-width="0.8"/><path d="M6 6 L6 1.4 A4.6 4.6 0 0 1 10.6 6Z" fill="#e88a30"/><path d="M6 6 L8.5 8" stroke="#555" stroke-width="0.9"/></svg>
<div class="a num" style="left:232.00px;top:560.20px;width:93.50px;height:21.80px;border-radius:8px 0 0 8px"></div>
<div class="t" style="left:263.00px;top:563.76px;font-size:9.5px;line-height:9.5px;letter-spacing:-0.203px;color:#111;">Start: 1</div>
<svg class="a" style="left:238.00px;top:565.70px;" width="4" height="5" viewBox="0 0 4 5"><path d="M3.5 0.3 L0.5 2.5 L3.5 4.7Z" fill="#5a5a5a"/></svg>
<svg class="a" style="left:315.50px;top:565.70px;" width="4" height="5" viewBox="0 0 4 5"><path d="M0.5 0.3 L3.5 2.5 L0.5 4.7Z" fill="#5a5a5a"/></svg>
<div class="a num" style="left:325.00px;top:560.20px;width:89.00px;height:21.80px;border-radius:0 8px 8px 0"></div>
<div class="t" style="left:351.00px;top:563.76px;font-size:9.5px;line-height:9.5px;letter-spacing:-0.254px;color:#111;">End: 250</div>
<svg class="a" style="left:331.00px;top:565.70px;" width="4" height="5" viewBox="0 0 4 5"><path d="M3.5 0.3 L0.5 2.5 L3.5 4.7Z" fill="#5a5a5a"/></svg>
<svg class="a" style="left:404.00px;top:565.70px;" width="4" height="5" viewBox="0 0 4 5"><path d="M0.5 0.3 L3.5 2.5 L0.5 4.7Z" fill="#5a5a5a"/></svg>
<div class="a num" style="left:419.00px;top:560.20px;width:71.00px;height:21.80px;border-radius:8px"></div>
<div class="t" style="left:452.00px;top:563.76px;font-size:9.5px;line-height:9.5px;letter-spacing:-0.783px;color:#111;">1</div>
<svg class="a" style="left:425.00px;top:565.70px;" width="4" height="5" viewBox="0 0 4 5"><path d="M3.5 0.3 L0.5 2.5 L3.5 4.7Z" fill="#5a5a5a"/></svg>
<svg class="a" style="left:480.00px;top:565.70px;" width="4" height="5" viewBox="0 0 4 5"><path d="M0.5 0.3 L3.5 2.5 L0.5 4.7Z" fill="#5a5a5a"/></svg>
<div class="a btn" style="left:505.00px;top:560.20px;width:16.30px;height:21.80px;border-radius:4px 0 0 4px"></div>
<div class="a btn" style="left:520.80px;top:560.20px;width:16.30px;height:21.80px;border-radius:0"></div>
<div class="a btn" style="left:536.60px;top:560.20px;width:16.30px;height:21.80px;border-radius:0"></div>
<div class="a btn" style="left:552.40px;top:560.20px;width:16.30px;height:21.80px;border-radius:0"></div>
<div class="a btn" style="left:568.20px;top:560.20px;width:16.30px;height:21.80px;border-radius:0"></div>
<div class="a btn" style="left:584.00px;top:560.20px;width:16.30px;height:21.80px;border-radius:0 4px 4px 0"></div>
<svg class="a" style="left:506.20px;top:562.30px;" width="14" height="12" viewBox="0 0 14 12"><path d="M2 1.5V10.5" stroke="#333" stroke-width="2.6"/><path d="M2 1.5V10.5" stroke="#f2f2f2" stroke-width="1.5"/><path d="M8 1.5L3.5 6L8 10.5Z M13 1.5L8.5 6L13 10.5Z" fill="#f2f2f2" stroke="#3a3a3a" stroke-width="0.7"/></svg>
<svg class="a" style="left:522.00px;top:562.30px;" width="14" height="12" viewBox="0 0 14 12"><path d="M7 1.5L2 6L7 10.5Z M12.5 1.5L7.5 6L12.5 10.5Z" fill="#f2f2f2" stroke="#3a3a3a" stroke-width="0.7"/></svg>
<svg class="a" style="left:537.80px;top:562.30px;" width="14" height="12" viewBox="0 0 14 12"><path d="M12 0.8L2.5 6L12 11.2Z" fill="#f2f2f2" stroke="#3a3a3a" stroke-width="0.7"/></svg>
<svg class="a" style="left:553.60px;top:562.30px;" width="14" height="12" viewBox="0 0 14 12"><path d="M2 0.8L11.5 6L2 11.2Z" fill="#f2f2f2" stroke="#3a3a3a" stroke-width="0.7"/></svg>
<svg class="a" style="left:569.40px;top:562.30px;" width="14" height="12" viewBox="0 0 14 12"><path d="M1.5 1.5L6.5 6L1.5 10.5Z M7 1.5L12 6L7 10.5Z" fill="#f2f2f2" stroke="#3a3a3a" stroke-width="0.7"/></svg>
<svg class="a" style="left:585.20px;top:562.30px;" width="14" height="12" viewBox="0 0 14 12"><path d="M12 1.5V10.5" stroke="#333" stroke-width="2.6"/><path d="M12 1.5V10.5" stroke="#f2f2f2" stroke-width="1.5"/><path d="M1 1.5L5.5 6L1 10.5Z M6 1.5L10.5 6L6 10.5Z" fill="#f2f2f2" stroke="#3a3a3a" stroke-width="0.7"/></svg>
<div class="a " style="left:529.20px;top:568.20px;width:50.80px;height:13.80px;background:#d8d8d8;border-radius:3px 3px 0 0;box-shadow:0 0 2px rgba(0,0,0,0.4)"></div>
<div class="t" style="left:541.00px;top:572.26px;font-size:9.5px;line-height:9.5px;letter-spacing:0.406px;color:#111;">Not</div>
<div class="a dd" style="left:604.60px;top:560.00px;width:92.40px;height:22.00px;"></div>
<div class="t" style="left:611.00px;top:563.76px;font-size:9.5px;line-height:9.5px;letter-spacing:-0.486px;color:#f0f0f0;">No Sync</div>
<svg class="a" style="left:689.28px;top:563.92px;" width="5.44" height="8.16" viewBox="0 0 5.44 8.16"><path d="M2.72,0 L5.44,3.06 L0,3.06Z M0,5.1 L5.44,5.1 L2.72,8.16Z" fill="#ccc"/></svg>
<div class="a btn" style="left:711.00px;top:560.20px;width:14.50px;height:21.80px;"></div>
<svg class="a" style="left:713.00px;top:563.00px;" width="11" height="11" viewBox="0 0 11 11"><circle cx="5.5" cy="5.5" r="3.6" fill="#e24a26" stroke="#8a2a12" stroke-width="0.8"/></svg>
<div class="a " style="left:731.00px;top:560.20px;width:109.00px;height:21.80px;border:1px solid #4a4a4a;border-radius:4px 0 0 4px;background:linear-gradient(#9a9a9a,#acacac)"></div>
<svg class="a" style="left:733.50px;top:561.50px;" width="14" height="14" viewBox="0 0 14 14"><g fill="none" stroke="#4a4a3a" stroke-width="2.6" stroke-linecap="round"><circle cx="3.6" cy="10" r="2.3"/><path d="M5.2 8.2 L10.8 3.2 M8.2 5.6 L10 7.6 M10.2 3.8 L11.8 5.6"/></g><g fill="none" stroke="#efe4b0" stroke-width="1.4" stroke-linecap="round"><circle cx="3.6" cy="10" r="2.3"/><path d="M5.2 8.2 L10.8 3.2 M8.2 5.6 L10 7.6 M10.2 3.8 L11.8 5.6"/></g></svg>
<svg class="a" style="left:511.00px;top:515.00px;" width="10" height="10" viewBox="0 0 10 10"><path d="M0 1L9 10M0 4.5L5.5 10M0 8L2 10" stroke="#2e2e2e" stroke-width="0.9"/><path d="M0 2L8 10M0 5.5L4.5 10" stroke="#aaa" stroke-width="0.7"/></svg>
<svg class="a" style="left:0.00px;top:515.00px;" width="10" height="10" viewBox="0 0 10 10"><path d="M0 1L9 10M0 4.5L5.5 10M0 8L2 10" stroke="#2e2e2e" stroke-width="0.9"/><path d="M0 2L8 10M0 5.5L4.5 10" stroke="#aaa" stroke-width="0.7"/></svg>
</div></div>
</div></div></body></html>
